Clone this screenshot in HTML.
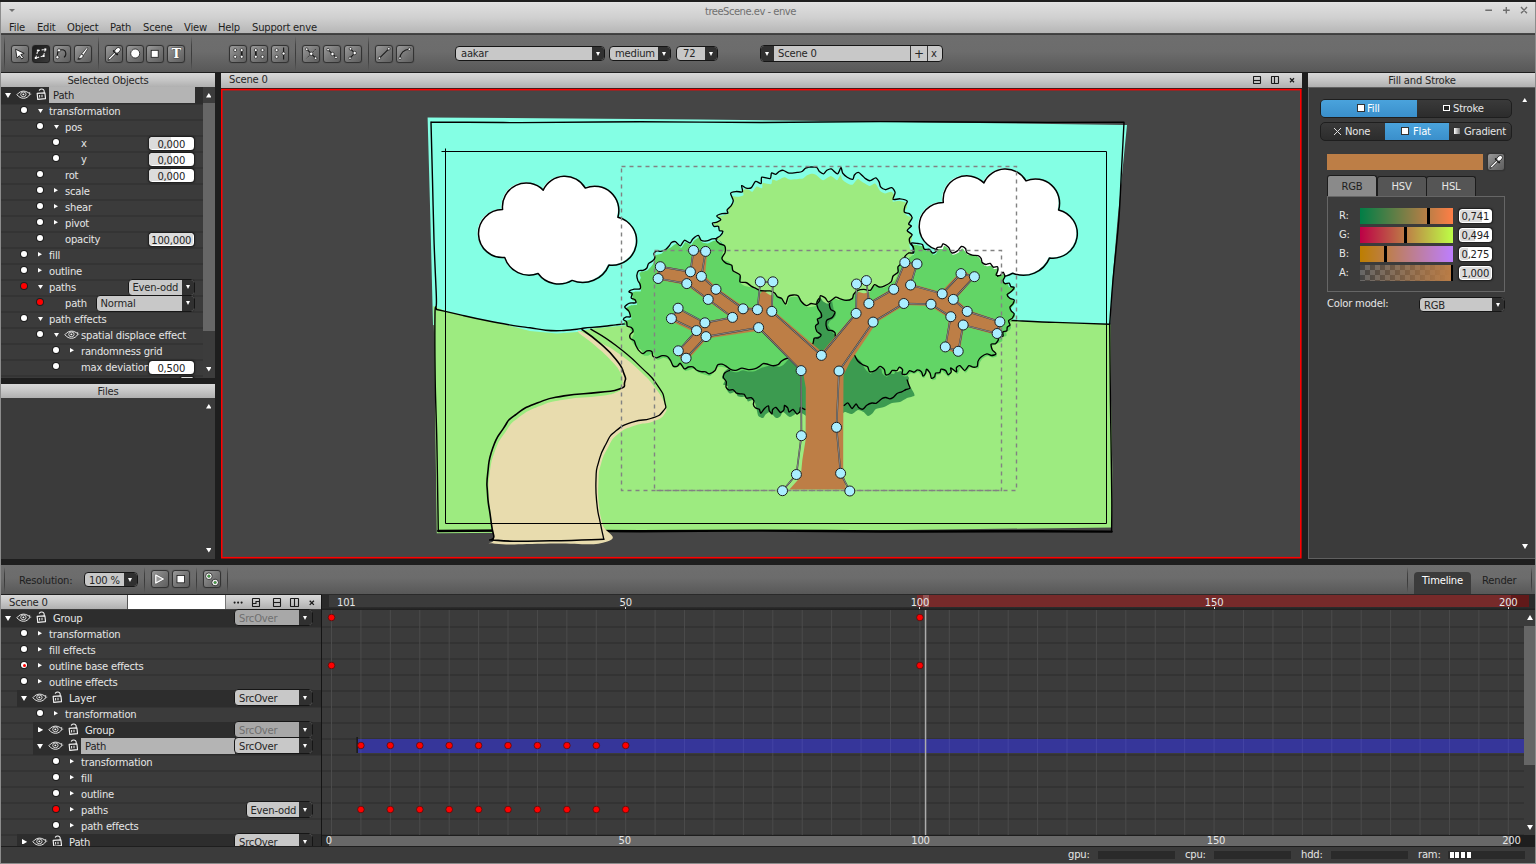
<!DOCTYPE html>
<html lang="en"><head><meta charset="utf-8"><title>treeScene.ev - enve</title>
<style>
*{box-sizing:border-box;margin:0;padding:0}
html,body{width:1536px;height:864px;overflow:hidden}
body{position:relative;background:#1e1e1e;font-family:"DejaVu Sans","Liberation Sans",sans-serif;font-size:10px;line-height:12px;color:#e6e6e6;letter-spacing:-0.2px;-webkit-font-smoothing:antialiased}
.a{position:absolute}
.t{position:absolute;white-space:pre;line-height:12px;height:12px}
.dk{color:#1e1e1e}
.hdr{position:absolute;background:linear-gradient(#d8d8d8,#c8c8c8 45%,#b0b0b0);color:#262626;text-align:center}
.tb{position:absolute;background:linear-gradient(#6e6e6e,#6c6c6c 45%,#585858)}
.btn{position:absolute;width:18px;height:18px;border:1px solid #333;box-shadow:0 0 1px rgba(0,0,0,.5);border-radius:3px;background:linear-gradient(135deg,#9a9a9a,#787878 50%,#5e5e5e);}
.btn.on{background:linear-gradient(135deg,#1a1a1a,#2a2a2a 50%,#3a3a3a);border-color:#222}
.btn svg{position:absolute}
.sep{position:absolute;width:1px;background:linear-gradient(rgba(50,50,50,0),#444 25%,#3a3a3a 50%,#444 75%,rgba(50,50,50,0))}
.cb{position:absolute;border:1px solid #161616;border-radius:4px;background:#c8c8c8;color:#262626;overflow:hidden}
.cb .ar{position:absolute;right:0;top:0;bottom:0;width:12px;background:#303030}
.cb .ar:after{content:"";position:absolute;left:50%;top:50%;margin-left:-2.5px;margin-top:-2px;border:2.5px solid transparent;border-top:4px solid #fff;border-bottom:0}
.cb .t{margin-top:1px}
.cb.dis{background:#a8a8a8;color:#707070}
.row{position:absolute;left:1px;height:16px}
.vb{position:absolute;border-radius:3.5px;background:#fff;color:#222;box-shadow:0 0 1.5px .3px rgba(20,20,20,.8);overflow:hidden}
.vb i{position:absolute;left:.6px;top:.6px;bottom:.6px;background:#dcdcdc;border-radius:2.5px 0 0 2.5px}
.vb .t{left:0;right:0;text-align:center;top:0px}

</style></head>
<body>
<div class="a" style="left:1px;top:2px;width:1534px;height:31px;background:linear-gradient(#e4e4e4,#dedede 6%,#d0d0d0 50%,#b6b6b6)"></div><div class="a" style="left:1px;top:33px;width:1534px;height:2px;background:linear-gradient(#4a4a4a,#3a3a3a)"></div>
<div class="a" style="left:9px;top:9px;border:3px solid transparent;border-top:3px solid #707070;border-bottom:0;width:0;height:0"></div>
<div class="t" style="left:705px;top:5.5px;color:#707070;letter-spacing:-0.5px">treeScene.ev - enve</div>
<svg class="a" style="left:1480px;top:2px" width="50" height="16" viewBox="1480 2 50 16"><g stroke="#6e6e6e" stroke-width="1.4" fill="none"><path d="M1485.3 10.2h6.700M1503 10.2h6.700M1506.3 6.900v6.700M1521 7.100l6 6.2M1527 7.100l-6 6.2"/></g></svg>
<div class="t dk" style="left:9px;top:22px">File</div>
<div class="t dk" style="left:37px;top:22px">Edit</div>
<div class="t dk" style="left:67px;top:22px">Object</div>
<div class="t dk" style="left:110px;top:22px">Path</div>
<div class="t dk" style="left:143px;top:22px">Scene</div>
<div class="t dk" style="left:184px;top:22px">View</div>
<div class="t dk" style="left:218px;top:22px">Help</div>
<div class="t dk" style="left:252px;top:22px">Support enve</div>
<div class="tb" style="left:1px;top:35px;width:1535px;height:37px"></div>
<div class="sep" style="left:4px;top:36px;height:35px"></div>
<div class="sep" style="left:98px;top:36px;height:35px"></div>
<div class="sep" style="left:191px;top:36px;height:35px"></div>
<div class="sep" style="left:295px;top:36px;height:35px"></div>
<div class="sep" style="left:368px;top:36px;height:35px"></div>
<div class="btn" style="left:11px;top:45px"><svg style="left:-1px;top:-1px;width:18px;height:18px" viewBox="0 0 18 18"><path d="M4.6 4.2l8.6 4.2-3.4 1.2 2.6 3.2-1.6 1.2-2.5-3.3-2.3 2.4z" fill="#fff" stroke="#1a1a1a" stroke-width="0.9" stroke-linejoin="round"/></svg></div>
<div class="btn on" style="left:32px;top:45px"><svg style="left:-1px;top:-1px;width:18px;height:18px" viewBox="0 0 18 18"><path d="M5.8 5.5L13.3 4.4 11.6 11 3.8 13z" fill="none" stroke="#e8e8e8" stroke-width="1.1" stroke-dasharray="2.2 1.6"/><rect x="4.9" y="4.6" width="2" height="2" fill="#fff"/><rect x="12.3" y="3.4" width="2" height="2" fill="#fff"/><rect x="2.8" y="12" width="2" height="2" fill="#fff"/><rect x="10.6" y="10" width="2" height="2" fill="#fff"/></svg></div>
<div class="btn" style="left:53px;top:45px"><svg style="left:-1px;top:-1px;width:18px;height:18px" viewBox="0 0 18 18"><path d="M4.4 12.2C4.2 8.5 5.2 5.4 6.2 5.3C9.5 4 12.5 5 12.8 8C13 10 12.5 11.5 11 12.4" fill="none" stroke="#1a1a1a" stroke-width="1.1"/><circle cx="6" cy="5.3" r="1.6" fill="#fff" stroke="#1a1a1a" stroke-width="0.7"/><circle cx="4.4" cy="12.2" r="1.6" fill="#fff" stroke="#1a1a1a" stroke-width="0.7"/></svg></div>
<div class="btn" style="left:74px;top:45px"><svg style="left:-1px;top:-1px;width:18px;height:18px" viewBox="0 0 18 18"><path d="M12.8 2.6L14 3.5 9.6 10.2 7.6 9z" fill="#fff" stroke="#1a1a1a" stroke-width="0.7"/><path d="M7.4 9.2L9.4 10.6C9 12.8 6.8 13.8 4 13.6C5.6 12.8 5.6 10.4 7.4 9.2z" fill="#fff" stroke="#1a1a1a" stroke-width="0.7"/><path d="M3.5 14.2h3" stroke="#1a1a1a" stroke-width="0.8"/></svg></div>
<div class="btn" style="left:105px;top:45px"><svg style="left:-1px;top:-1px;width:18px;height:18px" viewBox="0 0 18 18"><path d="M3 15.3L3.6 13.2 9.6 7.2 11 8.6 5 14.6z" fill="#fff" stroke="#1a1a1a" stroke-width="0.8" stroke-linejoin="round"/><path d="M8.8 6l3.4 3.4" stroke="#1a1a1a" stroke-width="2" stroke-linecap="round"/><ellipse cx="12.6" cy="5.3" rx="3.3" ry="2.3" transform="rotate(-45 12.6 5.3)" fill="#fff" stroke="#1a1a1a" stroke-width="0.8"/></svg></div>
<div class="btn" style="left:126px;top:45px"><svg style="left:-1px;top:-1px;width:18px;height:18px" viewBox="0 0 18 18"><circle cx="9.2" cy="8.5" r="4.5" fill="#fff" stroke="#1a1a1a" stroke-width="0.8"/></svg></div>
<div class="btn" style="left:146px;top:45px"><svg style="left:-1px;top:-1px;width:18px;height:18px" viewBox="0 0 18 18"><rect x="5.2" y="5.3" width="7" height="7" fill="#fff" stroke="#1a1a1a" stroke-width="0.8"/></svg></div>
<div class="btn" style="left:167px;top:45px"><svg style="left:-1px;top:-1px;width:18px;height:18px" viewBox="0 0 18 18"><text x="9.2" y="13.4" font-family="'DejaVu Serif','Liberation Serif',serif" font-weight="bold" font-size="13" text-anchor="middle" fill="#fff" stroke="#1a1a1a" stroke-width="0.6" paint-order="stroke">T</text></svg></div>
<div class="btn" style="left:229px;top:45px"><svg style="left:-1px;top:-1px;width:18px;height:18px" viewBox="0 0 18 18"><path d="M12.7 5.1v6.7" stroke="#1a1a1a" stroke-width="1.8"/><circle cx="6.2" cy="5.1" r="1.5" fill="#fff" stroke="#1a1a1a" stroke-width="0.7"/><circle cx="12.7" cy="5.1" r="1.5" fill="#fff" stroke="#1a1a1a" stroke-width="0.7"/><circle cx="6.2" cy="11.8" r="1.5" fill="#fff" stroke="#1a1a1a" stroke-width="0.7"/><circle cx="12.7" cy="11.8" r="1.5" fill="#fff" stroke="#1a1a1a" stroke-width="0.7"/></svg></div>
<div class="btn" style="left:250px;top:45px"><svg style="left:-1px;top:-1px;width:18px;height:18px" viewBox="0 0 18 18"><path d="M5.8 5.1v6.7" stroke="#1a1a1a" stroke-width="1.8"/><circle cx="5.8" cy="5.1" r="1.5" fill="#fff" stroke="#1a1a1a" stroke-width="0.7"/><circle cx="12.5" cy="5.1" r="1.5" fill="#fff" stroke="#1a1a1a" stroke-width="0.7"/><circle cx="5.8" cy="11.8" r="1.5" fill="#fff" stroke="#1a1a1a" stroke-width="0.7"/><circle cx="12.5" cy="11.8" r="1.5" fill="#fff" stroke="#1a1a1a" stroke-width="0.7"/></svg></div>
<div class="btn" style="left:271px;top:45px"><svg style="left:-1px;top:-1px;width:18px;height:18px" viewBox="0 0 18 18"><path d="M12.6 2.5v12" stroke="#1a1a1a" stroke-width="1.2"/><circle cx="5.6" cy="5.1" r="1.5" fill="#fff" stroke="#1a1a1a" stroke-width="0.7"/><circle cx="5.6" cy="11.8" r="1.5" fill="#fff" stroke="#1a1a1a" stroke-width="0.7"/><circle cx="12.6" cy="8.5" r="1.5" fill="#fff" stroke="#1a1a1a" stroke-width="0.7"/></svg></div>
<div class="btn" style="left:302px;top:45px"><svg style="left:-1px;top:-1px;width:18px;height:18px" viewBox="0 0 18 18"><path d="M4.7 4.2L13.6 13.2" stroke="#1a1a1a" stroke-width="1.1"/><path d="M13.6 4.2L4.7 13.2" stroke="#1a1a1a" stroke-width="0.9" stroke-dasharray="1.5 1.5"/><circle cx="4.7" cy="4.2" r="1.3" fill="#fff" stroke="#1a1a1a" stroke-width="0.7"/><circle cx="13.6" cy="13.2" r="1.3" fill="#fff" stroke="#1a1a1a" stroke-width="0.7"/><circle cx="9.2" cy="8.8" r="1.7" fill="#fff" stroke="#1a1a1a" stroke-width="0.7"/></svg></div>
<div class="btn" style="left:323px;top:45px"><svg style="left:-1px;top:-1px;width:18px;height:18px" viewBox="0 0 18 18"><path d="M5.1 4.6L13 12.4" stroke="#1a1a1a" stroke-width="1.1"/><circle cx="5.1" cy="4.6" r="1.3" fill="#fff" stroke="#1a1a1a" stroke-width="0.7"/><circle cx="9.5" cy="9" r="1.7" fill="#fff" stroke="#1a1a1a" stroke-width="0.7"/><circle cx="13" cy="12.4" r="1.3" fill="#fff" stroke="#1a1a1a" stroke-width="0.7"/></svg></div>
<div class="btn" style="left:344px;top:45px"><svg style="left:-1px;top:-1px;width:18px;height:18px" viewBox="0 0 18 18"><path d="M6.5 3.8L10.7 8 6 13.2" fill="none" stroke="#1a1a1a" stroke-width="1.1"/><circle cx="6.5" cy="3.8" r="1.3" fill="#fff" stroke="#1a1a1a" stroke-width="0.7"/><circle cx="10.7" cy="8" r="1.7" fill="#fff" stroke="#1a1a1a" stroke-width="0.7"/><circle cx="6" cy="13.2" r="1.3" fill="#fff" stroke="#1a1a1a" stroke-width="0.7"/></svg></div>
<div class="btn" style="left:375px;top:45px"><svg style="left:-1px;top:-1px;width:18px;height:18px" viewBox="0 0 18 18"><path d="M4.4 13.2L13.8 3.8" stroke="#1a1a1a" stroke-width="1.1"/><circle cx="4.4" cy="13.2" r="1.3" fill="#fff" stroke="#1a1a1a" stroke-width="0.7"/><circle cx="13.8" cy="3.8" r="1.3" fill="#fff" stroke="#1a1a1a" stroke-width="0.7"/></svg></div>
<div class="btn" style="left:396px;top:45px"><svg style="left:-1px;top:-1px;width:18px;height:18px" viewBox="0 0 18 18"><path d="M4 13.2C4.2 8 8 4.4 13.4 4.2" fill="none" stroke="#1a1a1a" stroke-width="1.1"/><circle cx="4" cy="13.2" r="1.3" fill="#fff" stroke="#1a1a1a" stroke-width="0.7"/><circle cx="13.4" cy="4.2" r="1.3" fill="#fff" stroke="#1a1a1a" stroke-width="0.7"/></svg></div>
<div class="cb" style="left:455px;top:46px;width:150px;height:15px"><div class="t" style="left:5px;top:0px">aakar</div><div class="ar"></div></div>
<div class="cb" style="left:609px;top:46px;width:62px;height:15px"><div class="t" style="left:5px;top:0px">medium</div><div class="ar"></div></div>
<div class="cb" style="left:676px;top:46px;width:42px;height:15px"><div class="t" style="left:6px;top:0px">72</div><div class="ar"></div></div>
<div class="cb" style="left:760px;top:45px;width:183px;height:17px"><div class="ar" style="left:0;right:auto;width:13px"></div><div class="t" style="left:17px;top:1px">Scene 0</div><div class="a" style="left:149px;top:0;width:1px;height:17px;background:#3a3a3a"></div><div class="a" style="left:166px;top:0;width:1px;height:17px;background:#3a3a3a"></div><div class="t" style="left:153px;top:1px;font-size:12px">+</div><div class="t" style="left:170px;top:1px">x</div></div>
<div class="hdr" style="left:1px;top:73px;width:214px;height:14px"><div class="t" style="left:0;right:0;top:1.5px">Selected Objects</div></div>
<div class="a" style="left:1px;top:87px;width:214px;height:291px;background:#3b3b3b;overflow:hidden">
<div class="a" style="left:0;top:16px;width:202px;height:2px;background:#343434"></div>
<div class="a" style="left:0;top:32px;width:202px;height:2px;background:#343434"></div>
<div class="a" style="left:0;top:48px;width:202px;height:2px;background:#343434"></div>
<div class="a" style="left:0;top:64px;width:202px;height:2px;background:#343434"></div>
<div class="a" style="left:0;top:80px;width:202px;height:2px;background:#343434"></div>
<div class="a" style="left:0;top:96px;width:202px;height:2px;background:#343434"></div>
<div class="a" style="left:0;top:112px;width:202px;height:2px;background:#343434"></div>
<div class="a" style="left:0;top:128px;width:202px;height:2px;background:#343434"></div>
<div class="a" style="left:0;top:144px;width:202px;height:2px;background:#343434"></div>
<div class="a" style="left:0;top:160px;width:202px;height:2px;background:#343434"></div>
<div class="a" style="left:0;top:176px;width:202px;height:2px;background:#343434"></div>
<div class="a" style="left:0;top:192px;width:202px;height:2px;background:#343434"></div>
<div class="a" style="left:0;top:208px;width:202px;height:2px;background:#343434"></div>
<div class="a" style="left:0;top:224px;width:202px;height:2px;background:#343434"></div>
<div class="a" style="left:0;top:240px;width:202px;height:2px;background:#343434"></div>
<div class="a" style="left:0;top:256px;width:202px;height:2px;background:#343434"></div>
<div class="a" style="left:0;top:272px;width:202px;height:2px;background:#343434"></div>
<div class="a" style="left:0;top:288px;width:202px;height:2px;background:#343434"></div>
</div>
<div class="a" style="left:0;top:0;width:215px;height:378px;overflow:hidden">
<div class="a" style="left:1px;top:87px;width:202px;height:17px;background:#2d2d2d"></div>
<div class="a" style="left:49px;top:87px;width:146px;height:16px;background:#b4b4b4"></div>
<svg class="a" style="left:5px;top:92.5px" width="6" height="5" viewBox="0 0 6 5"><path d="M0 0h6L3.0 5z" fill="#fff"/></svg>
<svg class="a" style="left:16px;top:89.6px" width="16" height="9.6" viewBox="0 0 16 11" preserveAspectRatio="none"><path d="M0.9 5.4C3 2.4 5.4 1.3 7.6 1.3S12.2 2.5 14 4.8C12.4 8 10 9.5 7.6 9.5S2.8 8.2 0.9 5.4z" fill="none" stroke="#f2f2f2" stroke-width="1"/><path d="M12.6 3.2l1.6-.5M13.4 4.6l1.9.1" stroke="#f2f2f2" stroke-width="0.7" fill="none"/><circle cx="7.4" cy="5" r="2.7" fill="none" stroke="#f2f2f2" stroke-width="0.9"/><circle cx="7.4" cy="5" r="1" fill="#f2f2f2"/></svg>
<svg class="a" style="left:35.5px;top:88.2px" width="10.6" height="12.4" viewBox="0 0 12 13" preserveAspectRatio="none"><path d="M9.3 5V3.6C9.3 1.9 8 1 6.6 1 5.4 1 4.4 1.5 3.8 2.3" fill="none" stroke="#f2f2f2" stroke-width="1.2" stroke-linecap="round"/><path d="M1.3 5.7l8.8-.5.7 5.9-8.8.8z" fill="none" stroke="#f2f2f2" stroke-width="1.3" stroke-linejoin="round"/><path d="M4.1 7.3v2.6M6.8 7.1v2.6" stroke="#f2f2f2" stroke-width="1.1"/></svg>
<div class="t dk" style="left:53px;top:90px">Path</div>
<div class="a" style="left:20px;top:106.2px;width:8px;height:8px;border-radius:4px;background:#1e1e1e"></div><div class="a" style="left:21px;top:107.2px;width:6px;height:6px;border-radius:3px;background:#fff"></div><svg class="a" style="left:37.5px;top:109px" width="5" height="4" viewBox="0 0 5 4"><path d="M0 0h5L2.5 4z" fill="#fff"/></svg><div class="t" style="left:49px;top:106px;color:#e6e6e6">transformation</div>
<div class="a" style="left:36px;top:122.2px;width:8px;height:8px;border-radius:4px;background:#1e1e1e"></div><div class="a" style="left:37px;top:123.2px;width:6px;height:6px;border-radius:3px;background:#fff"></div><svg class="a" style="left:53.5px;top:125px" width="5" height="4" viewBox="0 0 5 4"><path d="M0 0h5L2.5 4z" fill="#fff"/></svg><div class="t" style="left:65px;top:122px;color:#e6e6e6">pos</div>
<div class="a" style="left:52px;top:138.2px;width:8px;height:8px;border-radius:4px;background:#1e1e1e"></div><div class="a" style="left:53px;top:139.2px;width:6px;height:6px;border-radius:3px;background:#fff"></div><div class="t" style="left:81px;top:138px;color:#e6e6e6">x</div>
<div class="vb" style="left:148.5px;top:136.5px;width:45.5px;height:13.5px"><i style="width:21.8px"></i><div class="t" style="top:2.2px">0,000</div></div>
<div class="a" style="left:52px;top:154.2px;width:8px;height:8px;border-radius:4px;background:#1e1e1e"></div><div class="a" style="left:53px;top:155.2px;width:6px;height:6px;border-radius:3px;background:#fff"></div><div class="t" style="left:81px;top:154px;color:#e6e6e6">y</div>
<div class="vb" style="left:148.5px;top:152.5px;width:45.5px;height:13.5px"><i style="width:21.8px"></i><div class="t" style="top:2.2px">0,000</div></div>
<div class="a" style="left:36px;top:170.2px;width:8px;height:8px;border-radius:4px;background:#1e1e1e"></div><div class="a" style="left:37px;top:171.2px;width:6px;height:6px;border-radius:3px;background:#fff"></div><div class="t" style="left:65px;top:170px;color:#e6e6e6">rot</div>
<div class="vb" style="left:148.5px;top:168.5px;width:45.5px;height:13.5px"><i style="width:21.8px"></i><div class="t" style="top:2.2px">0,000</div></div>
<div class="a" style="left:36px;top:186.2px;width:8px;height:8px;border-radius:4px;background:#1e1e1e"></div><div class="a" style="left:37px;top:187.2px;width:6px;height:6px;border-radius:3px;background:#fff"></div><svg class="a" style="left:53.7px;top:188.2px" width="4" height="4.6" viewBox="0 0 4 4.6"><path d="M0 0v4.6L4 2.3z" fill="#fff"/></svg><div class="t" style="left:65px;top:186px;color:#e6e6e6">scale</div>
<div class="a" style="left:36px;top:202.2px;width:8px;height:8px;border-radius:4px;background:#1e1e1e"></div><div class="a" style="left:37px;top:203.2px;width:6px;height:6px;border-radius:3px;background:#fff"></div><svg class="a" style="left:53.7px;top:204.2px" width="4" height="4.6" viewBox="0 0 4 4.6"><path d="M0 0v4.6L4 2.3z" fill="#fff"/></svg><div class="t" style="left:65px;top:202px;color:#e6e6e6">shear</div>
<div class="a" style="left:36px;top:218.2px;width:8px;height:8px;border-radius:4px;background:#1e1e1e"></div><div class="a" style="left:37px;top:219.2px;width:6px;height:6px;border-radius:3px;background:#fff"></div><svg class="a" style="left:53.7px;top:220.2px" width="4" height="4.6" viewBox="0 0 4 4.6"><path d="M0 0v4.6L4 2.3z" fill="#fff"/></svg><div class="t" style="left:65px;top:218px;color:#e6e6e6">pivot</div>
<div class="a" style="left:36px;top:234.2px;width:8px;height:8px;border-radius:4px;background:#1e1e1e"></div><div class="a" style="left:37px;top:235.2px;width:6px;height:6px;border-radius:3px;background:#fff"></div><div class="t" style="left:65px;top:234px;color:#e6e6e6">opacity</div>
<div class="vb" style="left:148.5px;top:232.5px;width:45.5px;height:13.5px"><i style="right:1px;border-radius:2.5px"></i><div class="t" style="top:2.2px">100,000</div></div>
<div class="a" style="left:20px;top:250.2px;width:8px;height:8px;border-radius:4px;background:#1e1e1e"></div><div class="a" style="left:21px;top:251.2px;width:6px;height:6px;border-radius:3px;background:#fff"></div><svg class="a" style="left:37.7px;top:252.2px" width="4" height="4.6" viewBox="0 0 4 4.6"><path d="M0 0v4.6L4 2.3z" fill="#fff"/></svg><div class="t" style="left:49px;top:250px;color:#e6e6e6">fill</div>
<div class="a" style="left:20px;top:266.2px;width:8px;height:8px;border-radius:4px;background:#1e1e1e"></div><div class="a" style="left:21px;top:267.2px;width:6px;height:6px;border-radius:3px;background:#fff"></div><svg class="a" style="left:37.7px;top:268.2px" width="4" height="4.6" viewBox="0 0 4 4.6"><path d="M0 0v4.6L4 2.3z" fill="#fff"/></svg><div class="t" style="left:49px;top:266px;color:#e6e6e6">outline</div>
<div class="a" style="left:20px;top:282.2px;width:8px;height:8px;border-radius:4px;background:#1e1e1e"></div><div class="a" style="left:21px;top:283.2px;width:6px;height:6px;border-radius:3px;background:#f00"></div><svg class="a" style="left:37.5px;top:285px" width="5" height="4" viewBox="0 0 5 4"><path d="M0 0h5L2.5 4z" fill="#fff"/></svg><div class="t" style="left:49px;top:282px;color:#e6e6e6">paths</div>
<div class="cb" style="left:128px;top:279px;width:67px;height:16.5px"><div class="t" style="left:3.5px;top:1.2px">Even-odd</div><div class="ar" style="width:12px"></div></div>
<div class="a" style="left:36px;top:298.2px;width:8px;height:8px;border-radius:4px;background:#1e1e1e"></div><div class="a" style="left:37px;top:299.2px;width:6px;height:6px;border-radius:3px;background:#f00"></div><div class="t" style="left:65px;top:298px;color:#e6e6e6">path</div>
<div class="cb" style="left:96px;top:295px;width:99px;height:16.5px"><div class="t" style="left:3.5px;top:1.2px">Normal</div><div class="ar" style="width:12px"></div></div>
<div class="a" style="left:20px;top:314.2px;width:8px;height:8px;border-radius:4px;background:#1e1e1e"></div><div class="a" style="left:21px;top:315.2px;width:6px;height:6px;border-radius:3px;background:#fff"></div><svg class="a" style="left:37.5px;top:317px" width="5" height="4" viewBox="0 0 5 4"><path d="M0 0h5L2.5 4z" fill="#fff"/></svg><div class="t" style="left:49px;top:314px;color:#e6e6e6">path effects</div>
<div class="a" style="left:36px;top:330.2px;width:8px;height:8px;border-radius:4px;background:#1e1e1e"></div><div class="a" style="left:37px;top:331.2px;width:6px;height:6px;border-radius:3px;background:#fff"></div>
<svg class="a" style="left:53.5px;top:333px" width="5" height="4" viewBox="0 0 5 4"><path d="M0 0h5L2.5 4z" fill="#fff"/></svg>
<svg class="a" style="left:64px;top:329.6px" width="16" height="9.6" viewBox="0 0 16 11" preserveAspectRatio="none"><path d="M0.9 5.4C3 2.4 5.4 1.3 7.6 1.3S12.2 2.5 14 4.8C12.4 8 10 9.5 7.6 9.5S2.8 8.2 0.9 5.4z" fill="none" stroke="#f2f2f2" stroke-width="1"/><path d="M12.6 3.2l1.6-.5M13.4 4.6l1.9.1" stroke="#f2f2f2" stroke-width="0.7" fill="none"/><circle cx="7.4" cy="5" r="2.7" fill="none" stroke="#f2f2f2" stroke-width="0.9"/><circle cx="7.4" cy="5" r="1" fill="#f2f2f2"/></svg>
<div class="t" style="left:81px;top:330px">spatial displace effect</div>
<div class="a" style="left:52px;top:346.2px;width:8px;height:8px;border-radius:4px;background:#1e1e1e"></div><div class="a" style="left:53px;top:347.2px;width:6px;height:6px;border-radius:3px;background:#fff"></div><svg class="a" style="left:69.7px;top:348.2px" width="4" height="4.6" viewBox="0 0 4 4.6"><path d="M0 0v4.6L4 2.3z" fill="#fff"/></svg><div class="t" style="left:81px;top:346px;color:#e6e6e6">randomness grid</div>
<div class="a" style="left:52px;top:362.2px;width:8px;height:8px;border-radius:4px;background:#1e1e1e"></div><div class="a" style="left:53px;top:363.2px;width:6px;height:6px;border-radius:3px;background:#fff"></div><div class="t" style="left:81px;top:362px;color:#e6e6e6">max deviation</div>
<div class="vb" style="left:148.5px;top:360.5px;width:45.5px;height:13.5px"><div class="t" style="top:2.2px">0,500</div></div>
<div class="vb" style="left:180px;top:376.5px;width:14px;height:13.5px"><i style="right:1px;border-radius:2.5px"></i><div class="t" style="top:2.2px"></div></div>
</div>
<div class="a" style="left:203px;top:87px;width:12px;height:291px;background:#3c3c3c"></div>
<div class="a" style="left:203px;top:103px;width:12px;height:228px;background:#666"></div>
<svg class="a" style="left:205.7px;top:93px" width="5.6" height="4.6" viewBox="0 0 5.6 4.6"><path d="M0 4.6h5.6L2.8 0z" fill="#fff"/></svg>
<svg class="a" style="left:205.7px;top:367px" width="5.6" height="4.6" viewBox="0 0 5.6 4.6"><path d="M0 0h5.6L2.8 4.6z" fill="#fff"/></svg>
<div class="hdr" style="left:1px;top:384px;width:214px;height:14px"><div class="t" style="left:0;right:0;top:1.5px">Files</div></div>
<div class="a" style="left:1px;top:398px;width:214px;height:161px;background:#3b3b3b"></div>
<svg class="a" style="left:205.7px;top:404px" width="5.6" height="4.6" viewBox="0 0 5.6 4.6"><path d="M0 4.6h5.6L2.8 0z" fill="#fff"/></svg>
<svg class="a" style="left:205.7px;top:548px" width="5.6" height="4.6" viewBox="0 0 5.6 4.6"><path d="M0 0h5.6L2.8 4.6z" fill="#fff"/></svg>
<div class="hdr" style="left:221px;top:73px;width:1081px;height:15px;text-align:left"><div class="t" style="left:8px;top:1px">Scene 0</div><svg class="a" style="left:1032px;top:3px" width="46" height="9" viewBox="0 0 46 9"><g fill="none" stroke="#1a1a1a" stroke-width="1.1"><rect x="0.5" y="0.5" width="7" height="7" rx="0.5"/><path d="M0.5 4.5h7"/><rect x="18.5" y="0.5" width="7" height="7" rx="0.5"/><path d="M21.5 0.5v7"/><path d="M37 2.3l4 4M41 2.3l-4 4" stroke-width="1.3"/></g></svg></div>
<div class="a" style="left:221px;top:88px;width:1081px;height:471px;background:#1e1e1e;overflow:hidden">
<svg class="a" style="left:0;top:0" width="1081" height="471" viewBox="221 88 1081 471"><rect x="221.75" y="89.6" width="1079.05" height="468.1" fill="#454545" stroke="#f00" stroke-width="1.6"/></svg>
<div class="a" style="left:2px;top:2px;width:1077px;height:467px;overflow:hidden">
<svg class="a" style="left:0;top:0" width="1077" height="467" viewBox="223 90 1077 467">
<path d="M427.6 117.4L700 119.5L1127 125L1117.5 220L1112.5 280L1110 326L1100 332L700 340L560 345L433 325L430.4 220z" fill="#84ffe4"/>
<path d="M433.2 306L445.3 311L464.1 315.5L487.5 320.8L510.9 326L530 331L557 333.5L577 332L592.5 328.4L623.8 325.5L700 322L1008.3 320.3L1055.6 322.4L1110.5 324.2L1111 400L1112.3 470L1112 527.5L900 530L700 531.5L436.8 533.3L435.5 440L434.4 345z" fill="#9deb80"/>
<path d="M431 122C445.8 122.1 485.2 122.6 520 122.6C554.8 122.6 600 121.8 640 121.8C680 121.8 720 122.5 760 122.5C800 122.5 840 121.6 880 121.6C920 121.6 959.3 122.2 1000 122.3C1040.7 122.4 1103.3 122.3 1124 122.3M431 122C431.2 131.7 432 160.3 432.5 180C433 199.7 433.4 220.8 434 240C434.6 259.2 435.9 283.9 436.3 295C436.7 306.1 436.2 304.6 436.2 306.5M1124 122.5C1123.6 130.4 1122.4 153.8 1121.5 170C1120.6 186.2 1120.2 201.7 1118.8 220C1117.4 238.3 1114.5 262.7 1113 280C1111.5 297.3 1110.2 316.7 1109.7 324" fill="none" stroke="#000" stroke-linecap="round" stroke-linejoin="round" stroke-width="1.4"/>
<path d="M436.7 309.5C436.4 310.1 435.2 301.2 435 313C434.8 324.8 434.9 358.8 435.2 380C435.5 401.2 436.4 420 436.8 440C437.2 460 437.6 484.8 437.8 500C438.1 515.2 438.2 525.8 438.3 531M1109.7 324.2C1109.8 336.8 1110.2 380.7 1110.4 400C1110.6 419.3 1110.8 423.3 1111 440C1111.2 456.7 1111.7 484.7 1111.8 500C1111.9 515.3 1111.6 526.3 1111.6 531.6M436.7 309.5C438.1 309.8 440.7 310.4 445.3 311.4C449.9 312.4 457.1 314.1 464.1 315.7C471.1 317.3 479.7 319.2 487.5 320.8C495.3 322.4 503.8 323.9 510.9 325.1C518 326.3 524.2 327 530 327.8C535.8 328.6 540.4 329.7 545.6 330.2C550.8 330.7 556.1 330.8 561.3 330.6C566.5 330.4 573 329.6 576.9 329.2C580.8 328.8 580.8 328.4 584.7 328C588.6 327.6 595.1 327.2 600.3 326.7C605.5 326.2 611.4 325.4 615.9 324.9C620.4 324.4 625.1 323.8 627 323.6M1008.3 320.3C1016.2 320.6 1038.7 321.8 1055.6 322.4C1072.5 323 1100.7 323.9 1109.7 324.2" fill="none" stroke="#000" stroke-linecap="round" stroke-linejoin="round" stroke-width="1.4"/>
<path d="M438.3 531C451.9 530.9 486.4 530.4 520 530.4C553.6 530.4 600 531.2 640 531.2C680 531.2 720 530.6 760 530.6C800 530.6 840 531.4 880 531.5C920 531.6 961.4 531.2 1000 531.2C1038.6 531.2 1093 531.5 1111.6 531.6" fill="none" stroke="#000" stroke-linecap="round" stroke-linejoin="round" stroke-width="2.4"/>
<path d="M578.4 332.3C580.8 335.4 586 337.7 595 345.5C604 353.3 605.3 354.4 612 361.5C618.7 368.6 617.2 367.1 620 372C622.8 376.9 622.2 375.7 622.5 380C622.8 384.3 622.7 384.7 621 388C619.3 391.3 621.6 390.4 616 392.5C610.4 394.6 613.6 394.1 600 396C586.4 397.9 581 396.8 565 399.5C549 402.2 552.5 401.1 540 406C527.5 410.9 527.2 411.1 518 418C508.8 424.9 511.6 423.2 505.5 432C499.4 440.8 499.3 439.5 495 451C490.7 462.5 491.1 463.3 489.5 475C487.9 486.7 488.6 484.1 489 495C489.4 505.9 489.7 504.5 491 516C492.3 527.5 492.9 530.6 494 538C495.1 545.4 480.1 542.2 495 543.7C509.9 545.2 520.1 544.1 550 543.5C579.9 542.9 593.3 546.7 607.3 541.5C621.3 536.3 604.7 533.7 602.5 524C600.3 514.3 600.1 516.5 599 505C597.9 493.5 598 491.9 598.5 481C599 470.1 598.5 472.9 601 464C603.5 455.1 603.5 455.5 608 447.5C612.5 439.5 610.8 439.9 618 434C625.2 428.1 625.7 428.8 635 425.5C644.3 422.2 645.1 424.6 653 421.5C660.9 418.4 661.4 418.7 664.5 414C667.6 409.3 666.8 410.7 664.5 404C662.2 397.3 662.3 397.5 656 389C649.7 380.5 651.1 381.6 641 372C630.9 362.4 628.9 360.9 618 353C607.1 345.1 608.5 347.6 600 342.5C591.5 337.4 591.8 336.7 586 334C580.2 331.3 576 329.2 578.4 332.3z" fill="#e8dcae"/>
<path d="M582.1 329.6C587.1 333.4 588.4 333.2 598.6 342.1C608.8 351 608.4 350 616 359.4C623.6 368.8 621.2 366.5 623.8 373.3C626.4 380.1 626 377.3 624.7 382C623.4 386.7 627.2 385.9 619.4 389C611.6 392.1 615.2 390.3 598.6 392.4C582 394.5 582.1 392.8 563.9 395.9C545.7 399 552.4 397.1 537.8 402.8C523.2 408.5 525.7 407.2 515.3 415C504.9 422.8 509.9 418.9 503.1 428.9C496.3 438.9 497.3 435.1 492.7 448.2C488.1 461.3 489.4 459 487.8 472.5C486.2 486 486.8 480.8 487.5 493.3C488.2 505.8 488.3 501.7 490.1 514.2C491.9 526.7 491.3 527.1 493.6 535C495.9 542.9 481 538.7 497.9 540.4C514.8 542.1 518.2 541.1 550 540.8C581.8 540.5 587.7 539.8 603.8 539.3" fill="none" stroke="#000" stroke-linecap="round" stroke-linejoin="round" stroke-width="1.6"/>
<path d="M590.8 329.1C598.4 334.1 600.6 333.9 616 345.6C631.4 357.3 629.5 356.1 642 368.1C654.5 380.1 650.8 375.6 657.6 385.5C664.4 395.4 663 393.3 664.6 401.1C666.2 408.9 667 406.3 662.8 411.5C658.6 416.7 659.6 415.4 650.7 418.5C641.9 421.6 643.7 418.2 633.3 421.9C622.9 425.6 624.3 424 616 430.8C607.7 437.6 610.8 435.3 605.6 444.7C600.4 454.1 601.5 451.7 598.6 462.1C595.7 472.5 596.5 466.9 596 479.4C595.5 491.9 595.6 490.8 596.9 503.8C598.2 516.8 598.2 512.1 600.3 522.8C602.4 533.4 602.8 534.3 603.8 539.3" fill="none" stroke="#000" stroke-linecap="round" stroke-linejoin="round" stroke-width="1.3"/>
<g transform="translate(0 0)"><path d="M502.6 209.6A23.8 23.8 0 0 1 543.2 190.1A23.7 23.7 0 0 1 585.3 188.1A24.2 24.2 0 0 1 617.9 217.2A24.4 24.4 0 0 1 608.9 265.1A28.4 28.4 0 0 1 572.1 280.4A25.7 25.7 0 0 1 538.1 273.5A25.7 25.7 0 0 1 504.7 257.5A24 24 0 1 1 502.6 209.6z" fill="#fff" transform="translate(-1 -0.6)"/><path d="M502.6 209.6A23.8 23.8 0 0 1 543.2 190.1A23.7 23.7 0 0 1 585.3 188.1A24.2 24.2 0 0 1 617.9 217.2A24.4 24.4 0 0 1 608.9 265.1A28.4 28.4 0 0 1 572.1 280.4A25.7 25.7 0 0 1 538.1 273.5A25.7 25.7 0 0 1 504.7 257.5A24 24 0 1 1 502.6 209.6z" fill="none" stroke="#000" stroke-linecap="round" stroke-linejoin="round" stroke-width="1.5"/></g>
<g transform="translate(440.7 -7.2)"><path d="M502.6 209.6A23.8 23.8 0 0 1 543.2 190.1A23.7 23.7 0 0 1 585.3 188.1A24.2 24.2 0 0 1 617.9 217.2A24.4 24.4 0 0 1 608.9 265.1A28.4 28.4 0 0 1 572.1 280.4A25.7 25.7 0 0 1 538.1 273.5A25.7 25.7 0 0 1 504.7 257.5A24 24 0 1 1 502.6 209.6z" fill="#fff" transform="translate(-1 -0.6)"/><path d="M502.6 209.6A23.8 23.8 0 0 1 543.2 190.1A23.7 23.7 0 0 1 585.3 188.1A24.2 24.2 0 0 1 617.9 217.2A24.4 24.4 0 0 1 608.9 265.1A28.4 28.4 0 0 1 572.1 280.4A25.7 25.7 0 0 1 538.1 273.5A25.7 25.7 0 0 1 504.7 257.5A24 24 0 1 1 502.6 209.6z" fill="none" stroke="#000" stroke-linecap="round" stroke-linejoin="round" stroke-width="1.5"/></g>
<path d="M729 368C728 368.5 724.9 370.8 724.1 372C723.2 373.2 721.9 377 722 378C722.1 379 724.9 379.5 725 380.3C725.2 381 722.9 383.9 723.2 384.5C723.5 385.2 727.3 385.5 727.7 386.2C728.2 386.8 726.7 389.1 727 390C727.3 390.9 729 393.2 729.9 393.5C730.9 393.7 734.2 391.8 735.1 392.1C736.1 392.4 737 395.6 737.8 396.2C738.6 396.7 741.1 396.9 742 397C742.9 397.1 745.2 396.6 745.9 397.1C746.6 397.6 747.1 401.1 747.9 401.4C748.6 401.7 751.7 399.7 752.5 399.9C753.3 400.1 754.5 401.7 755 403C755.5 404.3 756.6 409.5 757 411C757.4 412.5 757.7 415.1 758.4 415.9C759.1 416.7 762.1 418.2 763 418C763.9 417.8 765 414.9 765.8 414.2C766.6 413.5 768.8 411.6 770 412C771.2 412.4 774.8 417.5 776 418C777.2 418.5 779.7 416.9 780.5 416.2C781.3 415.5 781.9 411.9 783 412C784.1 412.1 788.4 416.9 790 417C791.6 417.1 795.6 413.4 797 413C798.4 412.6 800.9 412.9 801.9 413.3C803 413.6 805.1 415.5 806 416C806.9 416.5 808.7 417.5 809.4 417.3C810.2 417.1 811.6 414.3 812.4 414.1C813.1 414 815.1 416 815.8 416C816.6 415.9 818.2 413.9 818.9 413.8C819.7 413.8 821.6 415.8 822.4 415.6C823.1 415.5 824.6 412.5 825.3 412.5C826.1 412.5 828.2 415.6 828.9 415.6C829.7 415.6 831.2 412.6 831.9 412.5C832.7 412.5 834.7 415 835.5 415C836.2 414.9 837.7 412 838.4 411.9C839.2 411.8 841.2 414.1 841.9 414.1C842.7 414.1 843.8 412 845 412C846.2 412 850.5 414.2 852 414C853.5 413.8 856.6 410.2 858 410C859.4 409.8 862.4 411.3 863.6 412C864.7 412.7 866.9 415.9 868 416C869.1 416.1 871.7 414 872.6 413.2C873.6 412.4 874.7 409.7 876 409C877.3 408.3 882.1 407.7 884 407C885.9 406.3 890.1 403.6 892 403C893.9 402.4 898.2 402.6 900 402C901.8 401.4 905.3 398.8 907 398C908.7 397.2 914 396.7 914.5 395.5C915 394.3 911.8 389.4 911 388C910.2 386.6 908.2 384.6 908 383.4C907.7 382.2 909.1 379 909 378C908.9 377 907.5 375.5 906.7 375.2C906 374.8 903.4 375.6 902.8 375.1C902.1 374.6 902.2 371.1 901.5 370.7C900.8 370.4 897.4 372.4 896.6 372.1C895.9 371.7 895.9 368.3 895.2 367.9C894.5 367.5 891.4 369 890.8 368.5C890.1 368.1 890.2 364.4 889.6 364C888.9 363.6 885.8 365.1 885.1 364.7C884.4 364.3 884.1 361.3 883.5 360.8C882.9 360.2 880.8 360.3 880 360C879.2 359.7 876.7 359.2 876.4 358.5C876.1 357.8 877.9 354.5 877.4 353.8C877 353.2 873.1 353.7 872.7 353C872.3 352.4 874.3 349 874 348.3C873.6 347.6 870.3 347.7 869.8 347.1C869.3 346.5 870.3 343.7 869.9 343.1C869.5 342.4 866.7 342.2 866.3 341.6C865.9 340.9 866.5 338.4 866.1 337.7C865.7 337.1 863.2 336.7 862.8 336C862.4 335.4 863.1 332.8 862.6 332.2C862.1 331.6 859 331.6 858.6 331C858.1 330.3 859.2 327.5 858.7 326.9C858.3 326.3 855.2 326.2 854.8 325.6C854.4 324.9 855.7 322 855.3 321.3C855 320.6 852 320.5 851.6 319.8C851.2 319.2 852.5 316.2 852.1 315.6C851.6 315 848.3 315.1 847.8 314.5C847.3 313.9 848.5 311 848.1 310.4C847.6 309.7 844.5 309.7 844.1 309.1C843.8 308.4 845.1 305.4 844.7 304.7C844.4 304.1 841.5 303.9 841 303.3C840.4 302.7 840.4 300.8 840 300C839.6 299.2 838.1 296.6 837.2 296.3C836.4 296 833.3 297.6 832.4 297.3C831.5 296.9 830.7 293.6 829.8 293.3C828.9 292.9 825.6 294.9 824.7 294.7C823.8 294.4 822.9 291.3 822.1 290.8C821.3 290.2 818.7 289.7 818 290C817.3 290.3 816.7 293.1 816 293.4C815.2 293.7 812.2 292.1 811.5 292.5C810.8 292.8 810.5 296.1 809.8 296.5C809.1 296.9 806.4 295.8 805.7 296.1C804.9 296.4 804.2 298.8 803.5 299.2C802.8 299.7 800.7 299.6 800 300C799.3 300.4 797.4 301.7 797.1 302.5C796.8 303.3 798 306.3 797.6 307.1C797.1 307.8 793.8 308 793.3 308.8C792.9 309.5 794.2 312.5 793.7 313.2C793.1 313.9 789.2 313.8 788.8 314.5C788.4 315.3 790.4 318.8 790.1 319.5C789.7 320.3 786.2 320.5 785.7 321.2C785.2 321.8 786.3 324.8 785.8 325.5C785.4 326.2 782.1 326.5 781.7 327.3C781.3 328 782.8 331.2 782.4 332C782.1 332.7 778.9 333.1 778.4 333.8C778 334.5 779.2 337.5 778.7 338.2C778.1 338.9 774.4 338.9 773.9 339.6C773.5 340.3 775.3 343.7 775 344.5C774.7 345.3 771.6 345.7 771 346.4C770.4 347 770.4 349.2 770 350C769.6 350.8 768.3 353.2 767.5 353.5C766.6 353.8 763.7 352.1 762.9 352.3C762 352.6 761.1 355.5 760.3 355.8C759.5 356.1 756.6 354.4 755.8 354.9C755.1 355.3 754.6 359.1 753.8 359.5C753 359.8 749.9 357.8 749.1 358.1C748.3 358.5 747.8 362.1 746.9 362.5C746.1 362.8 743 360.7 742.2 360.9C741.4 361.2 740.6 364.4 739.8 364.7C739 365.1 736.3 363.8 735.5 364.1C734.6 364.5 733.6 367.1 732.9 367.6C732.1 368 730 367.5 729 368z" fill="#3c9b50"/>
<path d="M729.6 370.3C729.1 370.6 725.9 371.8 725.2 372.6C724.4 373.4 723.2 376.1 723.3 377.2C723.4 378.3 726 380.5 726.3 381.6C726.7 382.8 725.7 386 726 387C726.3 388 728 389.6 728.9 390C729.7 390.3 732.5 389.4 733.3 389.8C734.2 390.1 735.4 392.4 736.1 392.9C736.9 393.4 739.1 393.8 740 393.9C740.9 394 743.4 393.7 744.2 394.2C744.9 394.7 745.7 397.8 746.5 398.2C747.3 398.6 750.3 397.3 751.2 397.6C752 397.9 753.6 400 753.9 400.8C754.2 401.6 753.2 403.7 753.4 404.5C753.5 405.4 754.6 407.2 755.3 407.8C756 408.4 758.6 408.7 759.3 409.3C759.9 410 760.2 413.4 760.8 413.3C761.4 413.2 763.6 409.4 764.5 408.5C765.4 407.6 768 405.8 768.5 406C769 406.2 768.8 409.5 769.2 410.5C769.6 411.4 771.6 414.1 772 414C772.4 413.9 772.1 410.6 772.5 409.8C773 409.1 775.1 407.2 776 407.5C776.9 407.8 779.6 412.2 780.5 412.5C781.4 412.8 783.5 410.6 783.9 409.8C784.4 409 784 405.7 784.5 405.5C785 405.3 787.3 407.2 787.8 408C788.3 408.8 788.4 411.8 789 412C789.6 412.2 792.1 409.3 793 409.5C793.9 409.7 796.2 413.8 797 414C797.8 414.2 799.6 412.2 800 411.4C800.4 410.7 799.9 407.7 800.5 407.5C801.1 407.3 804.5 409.3 805 409.5M844 405.5C844.5 405.2 847.1 402.6 848 403C848.9 403.4 851.1 408.4 852 408.5C852.9 408.6 855.2 404.1 856 404C856.8 403.9 857.9 406.9 858.7 407.6C859.5 408.2 861.8 409.5 862.8 409.2C863.8 408.9 865.8 406 866.8 405.3C867.9 404.5 870.9 403.2 872 403C873.1 402.8 875.3 403.7 876.1 403.4C877 403.1 878.7 401.4 879.4 400.8C880.1 400.2 881.5 398.7 882.3 398.3C883.1 397.9 885.1 397.4 886 397.5C886.9 397.6 888.8 398.9 889.7 398.9C890.5 398.9 892.4 398 893.3 397.4C894.2 396.8 896 394.2 897 393.5C898 392.8 900.7 392.3 901.7 391.8C902.8 391.3 905 389.9 906 389.5C907 389.1 909.7 388.9 910 388.3C910.3 387.7 908.8 385 908.5 384C908.2 383 907.4 380.5 907.2 380" fill="none" stroke="#000" stroke-linecap="round" stroke-linejoin="round" stroke-width="1.35"/>
<path d="M817 290L830 290L834 311L828 325L836 338L845 350L822 356L800 352L813 344L814 338L821 335L816 326L821 313z" fill="#3c9b50"/>
<path d="M722.9 243.7C722.1 243.1 719.5 241.7 718.3 241.3C717.2 241 714.4 240.7 713.2 240.9C712 241.1 709.2 243.2 707.9 243.4C706.6 243.5 703.1 243 702.1 242.3C701.1 241.6 700.3 237.6 699.3 237.4C698.3 237.2 694.8 240 693.8 240.9C692.8 241.8 692 244.8 691 245C690 245.2 686.5 242 685.4 242.3C684.3 242.6 682.3 247.6 681.3 247.8C680.2 248 677.7 243.7 676.4 243.7C675.1 243.7 671.5 247.1 670.2 247.8C668.9 248.5 666.5 249.2 665.5 249.8C664.5 250.5 663 252.7 661.8 253.4C660.6 254.1 655.9 254.4 654.9 255.5C653.9 256.6 654.3 261.4 653.5 263.1C652.7 264.8 649.5 268.9 647.9 270C646.3 271.1 640.4 271.9 639.6 272.8C638.8 273.7 640.8 276.7 640.8 277.8C640.7 279 638.9 281.1 638.9 282.6C638.9 284.1 641.4 289.9 641 290.9C640.6 291.9 636.5 291.1 635.2 291.5C633.9 291.8 630.2 293.2 629.9 293.7C629.6 294.2 632.2 295.2 632.5 295.9C632.8 296.7 631.8 299.3 632.2 299.9C632.6 300.6 635.4 300.9 635.9 301.5C636.5 302.1 637.4 304.3 636.8 304.8C636.2 305.3 632 305 630.7 305.5C629.5 306 625.8 308 625.7 308.9C625.6 309.8 628.9 312 629.6 313.2C630.2 314.3 631.9 317.7 631.3 318.7C630.7 319.7 624.9 320.7 624.3 321.5C623.7 322.3 625.1 324.7 625.8 325.3C626.4 325.9 629.3 326.3 629.9 326.9C630.4 327.6 630.3 330.3 630.8 331.1C631.3 331.9 633.9 332.4 634 333.5C634.1 334.6 631 338.7 631.3 340.3C631.6 341.9 635.6 346.1 636.8 347.3C638 348.5 640.7 349.4 641.6 350.4C642.4 351.4 643 355 643.8 355.6C644.6 356.2 647.4 355.6 648.5 355.4C649.5 355.2 651.7 353 652.8 353.5C653.9 354 656.5 359.3 657.7 359.8C658.9 360.3 662 357.8 663.2 357.7C664.4 357.6 666.9 358.7 667.9 359.3C668.9 359.8 670.9 361.6 671.6 362.6C672.3 363.6 673.2 367.8 674.3 368.1C675.4 368.4 680 365 681.3 365.3C682.6 365.6 683.9 370.5 685.4 370.9C686.9 371.3 692.4 368.7 693.8 368.8C695.2 368.9 696.6 371.4 697.5 371.9C698.5 372.5 700.6 373.2 702.1 373.7C703.6 374.2 709 376.2 710.4 375.8C711.8 375.4 712.8 371.6 713.8 370.5C714.8 369.5 717.3 367 718.8 366.7C720.3 366.4 725.6 367.6 727.1 368.1C728.6 368.6 730.3 370.8 731.5 371.3C732.6 371.8 735.5 372.4 736.8 372.3C738.1 372.2 741.5 370.3 743 370.2C744.4 370.2 747.8 371.5 749.3 371.6C750.8 371.7 754.1 371.3 755.5 370.9C756.9 370.5 759.5 368.6 761 368C762.5 367.4 766.5 366.3 768 366C769.5 365.7 772.3 365.4 773.6 365.5C774.8 365.5 777.8 366.8 779 366.7C780.2 366.6 782.8 365.2 783.8 364.4C784.8 363.7 786.7 361.3 787.4 360.5C788.1 359.7 789.2 357.6 790 357.2C790.8 356.9 793.6 358.1 794.4 357.8C795.3 357.4 796.2 354.8 797 354.3C797.8 353.9 800.1 354.2 801 354C801.9 353.8 804.1 353.5 804.8 353C805.5 352.4 806.1 349.6 806.8 349.1C807.6 348.6 810.4 349.3 811.2 348.9C812 348.5 813.3 346.9 813.8 345.9C814.3 344.9 814.2 341.4 815.2 340.3C816.2 339.2 821.8 337.7 822.1 336.9C822.4 336.1 818.7 334.2 818.1 333.1C817.4 332.1 816.5 328.7 816.6 327.8C816.7 326.9 819 326 819.2 325.2C819.4 324.4 818 321.8 818.4 321.1C818.8 320.4 821.9 319.8 822.3 319.1C822.7 318.4 822.5 316.3 822.1 315.3C821.7 314.3 819.2 311.8 818.7 310.6C818.2 309.3 817.7 306.1 817.8 304.8C817.9 303.5 819.2 300.8 819.3 299.5C819.5 298.2 819.5 294.7 819 294C818.5 293.3 815.9 293.8 815.2 293.3C814.4 292.8 813.3 290.1 812.5 289.8C811.7 289.5 808.8 291 808 290.7C807.1 290.4 806.1 287.7 805.3 287.4C804.4 287.1 801.6 288.5 800.8 288.1C800 287.7 799.2 284.5 798.4 284.1C797.6 283.7 794.8 285.2 793.9 284.9C793 284.7 791.6 282.7 791 282C790.4 281.3 789.6 279.1 788.9 278.7C788.1 278.4 785.4 279.4 784.6 279C783.9 278.7 783.3 276 782.6 275.6C781.9 275.2 779.1 276.2 778.4 275.8C777.7 275.4 777.2 272.6 776.5 272.2C775.8 271.8 773.1 272.6 772.4 272.2C771.7 271.7 771.2 269.1 770.5 268.6C769.8 268.2 767.1 269 766.5 268.5C765.8 268 765.4 265 764.8 264.5C764.1 264 761.9 264.1 761 264C760.1 263.9 757.7 264.4 757 263.9C756.3 263.4 755.9 260 755.2 259.6C754.5 259.1 751.6 260.4 750.9 260.1C750.1 259.7 749.3 257.1 748.6 256.6C747.9 256.2 745.4 256.8 744.7 256.4C744 255.9 743.1 253.4 742.4 253C741.6 252.7 738.9 253.7 738.2 253.3C737.4 253 736.6 250.3 735.9 250C735.1 249.6 732.3 250.7 731.6 250.3C730.9 249.9 730.4 246.7 729.7 246.3C729 245.9 726.2 247 725.4 246.7C724.6 246.4 723.7 244.3 722.9 243.7z" fill="#62d566"/>
<path d="M913.8 254.8C914.3 254.1 914.5 250.9 914.3 249.7C914.2 248.6 911.9 245.5 912.4 245C912.9 244.5 917.7 245.3 919 245.5C920.3 245.7 922.4 246.2 923.2 246.8C924 247.5 924.9 250.2 925.8 250.7C926.6 251.2 929.7 250.6 930.6 251.1C931.4 251.5 932.5 254.6 933.2 254.8C933.9 255 935.9 253.8 936.5 253.2C937.1 252.6 937.5 250 938.2 249.6C938.9 249.2 941.9 249.8 942.6 249.4C943.3 248.9 943.5 245.8 944.3 245.8C945.1 245.8 948.2 248.7 949.1 249.7C950.1 250.8 951.6 254.4 952.7 254.8C953.8 255.2 957.2 253.5 958.3 252.8C959.4 252.1 961.3 248.3 962.4 248.5C963.5 248.7 966.6 254.1 967.9 254.8C969.2 255.5 972.5 254.5 973.8 254.8C975.1 255.1 977.9 256.5 979 257.6C980.1 258.7 982.3 263.5 983.2 264.5C984.1 265.5 985.9 266.2 986.8 266.3C987.7 266.5 990.2 265.5 991.1 265.8C991.9 266.1 993.4 268.8 994.3 269.1C995.1 269.4 998.2 267.8 998.5 268.7C998.8 269.6 996.5 276.4 997.1 277C997.7 277.6 1003.2 273.5 1004 274.2C1004.8 274.9 1003.6 281.5 1004 282.6C1004.4 283.7 1006.9 282.8 1007.5 283.3C1008 283.8 1008.4 286.5 1009 287C1009.7 287.4 1012.2 286.7 1012.9 287C1013.6 287.3 1015.4 288.9 1015.2 289.5C1015 290.1 1011.8 291.4 1011 292.2C1010.2 293 1007.7 295.3 1008.2 296.4C1008.7 297.5 1014.9 300.5 1015.2 302C1015.5 303.5 1011 307.3 1011 308.9C1011 310.5 1015.4 314.3 1015.2 315.9C1015 317.5 1010.1 321.5 1009.6 322.8C1009.1 324.1 1011 326.1 1011 327C1011 327.9 1010.3 329.6 1009.7 330.2C1009.2 330.7 1006.7 331 1006.3 331.7C1005.9 332.3 1006.9 335.3 1006.4 335.9C1005.9 336.5 1002.7 336.3 1002.2 336.9C1001.7 337.5 1002.6 340.4 1002.3 341C1001.9 341.7 1000.2 342.1 999 342.7C997.8 343.3 992.7 345.2 992.1 346.2C991.5 347.2 992.9 350.4 993.5 351.6C994.1 352.7 997.1 355.2 997 355.9C996.9 356.6 993.5 357.5 992.5 357.5C991.4 357.5 989.1 355.8 987.9 355.9C986.7 356 983.4 357.8 982.4 358.7C981.4 359.6 980 362.1 979.5 363.2C979 364.3 979.3 367.9 978.2 368.4C977.1 368.9 971.4 367.2 969.9 367.7C968.4 368.2 966.8 372.6 965.7 372.6C964.7 372.6 961.9 367.5 960.9 367.7C959.9 367.9 958.5 373.7 957.4 373.9C956.3 374.1 952.8 369.5 951.8 369.8C950.8 370.1 950.1 376.5 949 376.7C947.9 376.9 943.1 371.5 942.1 371.2C941.1 370.9 941.1 373.8 940.4 374.2C939.8 374.7 937.1 374.4 936.5 374.9C936 375.5 936.4 378.5 935.9 379.1C935.4 379.7 933 380.7 932.4 380.2C931.8 379.7 931.6 376.2 931 375.1C930.4 374.1 928.3 370.9 927.5 371.2C926.7 371.5 925 378 924 378.1C923 378.2 919.6 372.4 918.5 371.9C917.4 371.4 915.8 373.6 914.9 373.8C914 373.9 911.6 373 910.7 373.2C909.8 373.5 908.2 375.6 907.3 375.9C906.4 376.3 904 376.8 903.2 376C902.4 375.2 901.2 369.8 900.4 369.1C899.6 368.4 897.2 369.5 896.4 370.1C895.7 370.6 894.9 373.5 894.1 373.9C893.3 374.4 890.4 373.6 889.6 373.9C888.7 374.3 887.4 376.8 886.6 376.7C885.8 376.6 883 374.5 882.4 373.5C881.7 372.5 881.9 368.9 881 368.4C880.1 367.9 876.3 368.9 875.1 369.5C873.9 370.2 871.7 373.6 870.7 373.7C869.7 373.8 867.5 371.6 866.7 370.8C865.8 370 864.5 367.8 863.8 366.7C863.1 365.6 861.5 362.2 860.5 361.1C859.5 359.9 856.4 357.7 855.4 357C854.4 356.3 852.6 356 852.1 355.4C851.6 354.8 851.6 352.2 851.1 351.6C850.5 351 848.1 350.9 847.5 350.3C846.9 349.8 846.6 347.9 846 347C845.4 346.1 843.4 343 842.4 342.3C841.3 341.5 837.4 341.2 836.7 340.3C836 339.4 836.9 335.8 836 334.8C835.1 333.8 830 332.9 829 332C828 331.1 827.6 328.4 827.5 327.3C827.3 326.1 827.1 323.2 827.7 322.3C828.3 321.4 831.9 320.1 832.8 319.1C833.8 318.2 836.3 315.4 836 314C835.7 312.6 831.1 308.6 830.4 307C829.7 305.4 829.3 301.2 829.6 300C829.9 298.8 831.8 297.5 832.7 297.1C833.6 296.7 836.5 297.1 837.2 296.5C838 295.9 838.6 292.6 839.4 292C840.2 291.5 843.3 292.3 844.2 291.9C845.1 291.5 846.2 289.1 847 288.5C847.8 287.9 850.1 287.3 851 287C851.9 286.7 853.7 286.7 854.4 286.3C855 285.8 855.9 283.5 856.6 283.2C857.3 282.8 859.6 283.5 860.4 283.2C861.1 282.9 862 280.8 862.7 280.5C863.5 280.2 865.9 281.1 866.6 280.7C867.2 280.2 867.8 277.3 868.4 276.9C869.1 276.5 871.8 277.9 872.5 277.6C873.3 277.3 873.9 274.6 874.6 274.3C875.3 273.9 877.9 275.1 878.6 274.8C879.4 274.5 880.4 272.6 881 272C881.6 271.4 883.1 269.8 883.9 269.5C884.7 269.2 887.3 269.8 888 269.4C888.8 269 889.6 266.4 890.4 266C891.2 265.6 893.9 266.5 894.6 266C895.3 265.5 895.8 262.3 896.6 261.8C897.3 261.4 900.2 262.5 900.9 262.2C901.7 261.8 902.5 259.1 903.3 258.8C904.1 258.4 906.9 259.5 907.7 259.1C908.5 258.8 909.4 256.2 910.1 255.7C910.8 255.2 913.3 255.5 913.8 254.8z" fill="#62d566"/>
<path d="M817 290L830 290L834 311L828 325L836 338L845 350L822 356L800 352L813 344L814 338L821 335L816 326L821 313z" fill="#3c9b50"/>
<path d="M721.9 241.7C721.3 241.3 718.8 239.3 717.5 238.9C716.2 238.5 713.6 238.6 712.2 238.9C710.8 239.2 708.3 240.7 706.8 240.9C705.3 241.1 702.2 241 701.1 240.3C700 239.6 699.4 235.6 698.3 235.4C697.2 235.2 693.9 237.9 692.8 238.9C691.7 239.9 691.1 242.8 690 243C688.9 243.2 685.7 239.9 684.4 240.3C683.1 240.7 681.5 245.6 680.3 245.8C679.1 246 676.6 242.1 675.4 241.7C674.2 241.3 672.3 242 671.5 242.5C670.7 243.1 670 244.9 669.2 245.8C668.4 246.7 666.7 248.7 665.6 249.5C664.5 250.2 662 251.2 660.8 251.4C659.6 251.6 657.8 250.5 656.8 250.8C655.9 251.1 654.2 252.6 653.9 253.5C653.6 254.4 655.1 256.6 654.9 257.6C654.7 258.6 653.4 260.3 652.5 261.1C651.6 261.9 649.2 262.6 648.5 263.6C647.7 264.5 647.6 267.1 646.9 268C646.2 268.9 644.2 270 643.1 270.4C642 270.7 639.4 270.1 638.6 270.8C637.8 271.5 636.9 274.3 636.8 275.6C636.7 276.9 637.5 279.4 637.9 280.6C638.3 281.8 639.8 283.3 640.1 284.5C640.4 285.6 640.8 288.3 640 288.9C639.2 289.5 635.7 288.8 634.2 289.2C632.7 289.6 629.2 291.1 628.9 291.7C628.6 292.3 631.9 292.6 632.2 293.5C632.5 294.3 630.8 297.2 631.2 298C631.5 298.8 634.2 298.9 634.8 299.6C635.4 300.2 636.5 302.3 635.8 302.8C635.1 303.3 631.1 302.6 629.6 303.2C628.1 303.7 624.8 305.8 624.7 306.9C624.6 308 628.1 309.7 628.8 311C629.6 312.4 630.6 315.9 630.3 316.7C630 317.5 627.3 316.5 626.3 316.9C625.4 317.3 623.3 318.9 623.3 319.5C623.3 320.1 626.1 320.9 626.6 321.8C627.2 322.7 626.6 325.4 627.3 326.2C627.9 327 630.9 326.9 631.6 327.7C632.4 328.4 633.2 330.6 633 331.5C632.8 332.4 630.5 333.4 630.2 334.3C629.8 335.2 629.7 337.4 630.3 338.3C630.9 339.2 633.6 339.9 634.3 340.8C635 341.8 635.2 344.1 635.8 345.3C636.4 346.5 637.6 349 638.5 350.1C639.5 351.2 641.7 353.5 642.8 353.6C643.9 353.7 645.7 351.2 646.9 350.9C648.1 350.6 651 350.8 651.8 351.5C652.6 352.2 652.1 355 652.7 355.8C653.4 356.7 655.4 357.8 656.7 357.8C658 357.8 660.8 355.9 662.2 355.7C663.6 355.5 666.3 355.8 667.4 356.5C668.5 357.1 669.8 359.3 670.6 360.6C671.4 361.9 672.4 365.4 673.3 366.1C674.2 366.8 676.4 366.5 677.4 366.1C678.3 365.7 679.4 362.9 680.3 363.3C681.2 363.7 683.3 368.4 684.4 368.9C685.5 369.4 687.3 367.3 688.4 367C689.5 366.7 691.7 366.4 692.8 366.8C693.9 367.2 695.4 369.3 696.5 370C697.6 370.6 699.9 371.5 701.1 371.7C702.3 371.9 704.4 371.5 705.5 371.8C706.6 372.1 708.1 374 709.4 373.8C710.7 373.6 713.9 371.7 715 370.5C716.1 369.3 716.8 365.5 717.8 364.7C718.8 363.9 721 364.1 722.1 364.2C723.3 364.4 725 365.4 726.1 366.1C727.2 366.8 729.2 368.8 730.5 369.3C731.7 369.9 734.3 370.5 735.8 370.3C737.3 370.1 740.3 368.2 741.9 368.1C743.6 368 746.6 369.5 748.3 369.6C750 369.7 752.9 369.4 754.5 368.9C756.1 368.5 758.9 366.7 760 366C761.1 365.3 762.2 363.9 763.1 363.6C764 363.3 765.8 363.7 767 364C768.2 364.3 770.9 365.6 772.4 365.7C773.9 365.8 776.8 365.3 778 364.7C779.2 364.1 780.5 361.7 781.7 360.9C782.8 360 785.2 358.9 786.4 358.5C787.6 358.1 789.6 358.8 790.4 358.2C791.3 357.6 791.8 354.6 792.7 354.1C793.5 353.6 796.1 354.8 797 354.5C798 354.3 799.3 352.7 800 352C800.7 351.3 801.7 349.5 802.6 349.1C803.5 348.6 806 349.2 806.9 348.7C807.8 348.2 808.3 345.8 809.1 345.2C809.9 344.5 812.1 344.8 812.8 343.9C813.5 343 813.5 339.1 814.2 338.3C814.9 337.5 817.3 338.3 818.3 337.9C819.2 337.4 821.3 335.8 821.1 334.9C820.9 334 817.6 332.5 816.8 331.3C816.1 330 815.4 326.9 815.6 325.8C815.8 324.7 818.2 324.2 818.4 323.3C818.7 322.4 817 320 817.4 319.1C817.8 318.3 820.9 317.9 821.4 317.1C821.9 316.4 821.5 314.5 821.1 313.3C820.7 312.1 818.6 309.8 818 308.4C817.4 307 816.7 304.2 816.8 302.8C816.9 301.4 818.7 299 818.9 297.6C819 296.1 818.1 292.7 818 292M912.8 252.8C912.9 252.1 913.6 249 913.4 247.7C913.2 246.4 910.8 243.6 911.4 243C912 242.4 916.5 243.3 918 243.5C919.5 243.7 921.5 243.8 922.4 244.6C923.2 245.4 923.4 248.6 924.4 249.3C925.3 249.9 928.4 248.9 929.4 249.3C930.4 249.8 931.3 252.5 932.2 252.8C933.1 253.1 935.2 252.4 935.9 251.6C936.5 250.9 936.4 248.1 937.1 247.5C937.8 246.8 940.4 247.4 941.2 246.9C942 246.4 942.3 243.7 943.3 243.8C944.3 243.9 947.4 246.1 948.5 247.3C949.7 248.5 950.5 252.3 951.7 252.8C952.9 253.3 956.1 251.8 957.4 250.9C958.7 250.1 960.3 246.8 961.4 246.5C962.5 246.2 964.7 247.7 965.5 248.5C966.2 249.4 966 251.9 966.9 252.8C967.8 253.7 970.7 254.7 972.2 255.1C973.7 255.5 976.8 255.2 978 255.6C979.2 256 980.5 257.5 981.1 258.4C981.7 259.4 981.6 261.7 982.2 262.5C982.8 263.3 984.7 264.3 985.8 264.5C986.8 264.6 989.2 263 990.2 263.4C991.2 263.8 992.3 266.8 993.2 267.2C994.2 267.6 996.9 266.2 997.5 266.7C998.1 267.2 997.9 269.9 997.7 271C997.5 272.1 995.8 274.4 996.1 275C996.4 275.6 999.4 275.8 1000.3 275.4C1001.2 275 1002.4 272.1 1003 272.2C1003.6 272.3 1004.9 275.3 1004.9 276.4C1004.9 277.5 1003 279.6 1003 280.6C1003 281.6 1004.2 283.3 1005 283.7C1005.8 284 1008.4 282.7 1009.2 283.1C1010 283.5 1010.2 286.1 1010.9 286.6C1011.5 287.2 1014.1 286.8 1014.2 287.5C1014.3 288.2 1012.2 290.6 1011.3 291.6C1010.4 292.5 1007.4 293.5 1007.2 294.4C1007 295.3 1008.9 297.6 1009.8 298.3C1010.7 299.1 1013.8 299.3 1014.2 300C1014.6 300.7 1013.4 303 1012.9 303.9C1012.3 304.8 1010.2 306 1010 306.9C1009.8 307.8 1010.6 310 1011.2 310.9C1011.8 311.9 1014.1 313 1014.2 313.9C1014.3 314.8 1013 317.1 1012.3 318.1C1011.5 319 1008.9 319.9 1008.6 320.8C1008.3 321.7 1010.2 324.2 1010 325C1009.8 325.8 1007.7 326.3 1007.3 327.1C1006.9 327.9 1007.3 330.1 1006.8 330.8C1006.2 331.5 1003.4 331.3 1002.9 332C1002.4 332.8 1003.5 335.5 1003 336.2C1002.5 336.9 999.5 336.6 998.9 337.2C998.2 337.8 998.5 339.8 998 340.7C997.5 341.6 996.2 343.4 995.3 343.8C994.3 344.3 991.5 343.4 991.1 344.2C990.7 345 991.6 348.4 992.3 349.7C993 351 996.1 353.1 996 353.9C995.9 354.7 992.7 355.5 991.5 355.5C990.2 355.5 988.2 353.7 986.9 353.9C985.6 354.1 982.6 355.8 981.4 356.7C980.2 357.6 978.6 359.7 978.1 361C977.5 362.3 977.9 365.6 977.2 366.4C976.5 367.2 974.1 367.3 973 367.2C971.8 367.1 970 365.2 968.9 365.7C967.8 366.2 965.9 370.6 964.7 370.6C963.5 370.6 961 366.1 959.9 365.7C958.8 365.3 956.9 367 956.4 367.8C956 368.7 957.2 371.9 956.4 371.9C955.6 371.9 951.5 367.8 950.8 367.8C950.1 367.8 951.6 371.1 951.2 372C950.8 372.9 948.7 374.9 948 374.7C947.3 374.5 946.6 371.3 945.7 370.6C944.7 369.8 941.9 368.9 941.1 369.2C940.3 369.5 940.5 372.1 939.8 372.6C939.1 373.2 936.4 372.5 935.7 373.1C935 373.6 935.1 376.1 934.6 376.8C934 377.4 932 378.7 931.4 378.2C930.8 377.7 930.6 374.3 930 373.1C929.3 371.9 927.1 369.2 926.5 369.2C925.9 369.2 926 372.1 925.6 373.1C925.1 374 923.5 376.3 923 376.1C922.5 375.9 922.3 372.7 921.5 371.9C920.8 371 918.5 369.9 917.5 369.9C916.5 369.9 915.1 372.1 914 372.2C912.9 372.3 910.5 370.5 909.5 370.7C908.5 371 907.3 373.8 906.4 374.2C905.4 374.6 902.7 374.6 902.2 374C901.7 373.4 902.9 370.8 902.6 369.8C902.2 368.9 900.2 367 899.4 367.1C898.6 367.2 897.8 370.1 896.8 370.6C895.9 371 893.2 370 892.2 370.4C891.3 370.8 890.5 373.2 889.6 373.7C888.7 374.3 886.3 375.3 885.6 374.7C884.9 374.1 885.1 370.6 884.3 369.5C883.6 368.4 881.2 366.3 880 366.4C878.8 366.5 876.8 369.6 875.5 370.3C874.1 371 870.7 372.2 869.7 371.7C868.7 371.2 868.6 367.8 867.6 366.8C866.7 365.9 864.1 365.5 862.8 364.7C861.5 363.9 858.7 362 857.6 360.7C856.5 359.4 855.1 356.2 854.4 355C853.7 353.8 853.5 352.4 852.7 351.9C852 351.3 849.5 351.5 848.9 350.7C848.4 350 849.1 347.1 848.6 346.3C848.1 345.6 846.2 345.5 845 345C843.8 344.5 840.9 343.5 839.7 342.6C838.4 341.7 836.3 339.6 835.7 338.3C835.1 337 835.5 333.8 835 332.8C834.5 331.8 832.8 330.9 831.8 330.5C830.9 330.2 828.8 330.7 828 330C827.2 329.3 826.3 326.6 826.1 325.3C826 324 825.9 321.3 826.7 320.3C827.5 319.3 831.1 318.6 832.2 317.5C833.3 316.4 835.2 313.1 835 312C834.8 310.9 831.6 310.5 830.9 309.6C830.1 308.6 829.5 306.1 829.4 305C829.3 303.9 830.1 302.3 830 301.4C829.9 300.5 828.8 298.5 828.6 298" fill="none" stroke="#000" stroke-linecap="round" stroke-linejoin="round" stroke-width="1.35"/>
<path d="M789.4 489.5L800.7 476.8L802.4 459.4L805.6 440L805.8 388L803 372L760 330.5L707 338.5L690 357.5L681 359L676.5 352L694 332L673 322L671.5 315L679 310L703 322L730 317L708 301L686 285L660 280L657 272L662 266L690 271L691.5 257L697 250L707 254L705 276L717 288L744 307L757 308L760 294L765 288L771 290L774 311L822 352L855 313L856.5 296L860 288L868 290L871 301L893 288L900 272L906 262L916 267L912 284L941 292L958 274L965 271L974 278L956 299L968 310L1000 321L1001 328L996 335L964 326L960 350L955 353L945 349L949 318L930 306L905 305L877 322L850 362L843.5 375L843.2 440L843.2 468L846 489.5z" fill="#bd7e46"/>
<path d="M717 239C716.9 238.2 720.6 236.9 721.4 236.1C722.2 235.2 724 232.1 723.9 231.4C723.8 230.7 720.9 231 720.4 230.4C719.8 229.9 719.9 226.9 719.4 226.4C718.8 225.9 716.2 226.2 715.5 225.8C714.8 225.4 712.8 223.7 713.5 223C714.2 222.3 721.3 220.4 721.8 219.6C722.3 218.8 717.5 216.6 717.7 216.1C717.9 215.6 722.1 215.8 723.4 215.5C724.7 215.1 728.3 213.9 728.8 213.3C729.3 212.7 727.9 211.1 728.1 210.2C728.3 209.4 729.6 206.6 730.3 205.7C731 204.8 734.1 203.8 734.3 202.7C734.5 201.6 731.2 197 731.6 196.3C732 195.7 736.2 196.9 737.6 196.8C739 196.7 742.8 196 743.4 195.2C744 194.4 742.2 190.7 742.7 190C743.2 189.3 746.7 189 747.8 189.2C749 189.4 751.4 192 752.4 191.7C753.4 191.3 755.5 186.9 756.6 186.5C757.7 186.1 761.4 188.7 762.1 188.2C762.8 187.8 761.8 183.5 762.8 183C763.8 182.5 770 184.6 771.1 184.2C772.2 183.8 771.8 180 772.5 179.6C773.2 179.2 775.3 180.9 776.7 180.7C778.1 180.4 782.8 177.4 784.3 177.2C785.8 177.1 788.3 179.4 789.9 179.6C791.5 179.8 796.7 179.1 798.2 179C799.7 178.9 802 179 803 178.6C804 178.2 805.6 176.1 806.6 175.5C807.6 174.9 810.2 173.9 811.3 173.8C812.4 173.7 814.8 174.2 816.2 174.9C817.6 175.7 821.4 180 823.1 180.2C824.8 180.3 829.2 176.1 830.8 176.1C832.4 176.1 835.9 180.3 837 180.2C838.1 180 839.9 175 840.5 174.9C841.1 174.9 841.8 178.8 842.5 179.8C843.2 180.7 845.6 182.4 846.7 183C847.8 183.6 851 185.2 852.3 184.8C853.6 184.3 856.7 179.3 857.8 179C858.9 178.7 860.6 181 862 181.8C863.4 182.6 868.1 185.7 869.6 185.9C871.1 186.1 874 183 875.2 183.6C876.4 184.2 879 189.9 880.1 191.1C881.2 192.2 883.6 193.3 884.9 193.4C886.2 193.5 890.1 191.4 891.2 191.7C892.3 191.9 894.4 194.6 894.6 195.8C894.8 196.9 892 200.9 892.6 201.5C893.2 202.1 897.9 200.8 899.5 201C901.1 201.2 905.9 202.1 906.7 202.9C907.5 203.7 907 206.9 906.7 208C906.4 209.1 903.8 211.3 903.9 212.2C904 213.1 906.3 215.1 907.3 215.8C908.2 216.4 911.6 216.8 911.7 217.8C911.8 218.8 908.2 223 908.1 224C908 225 911.1 225.2 910.9 226C910.7 226.8 906.6 229.6 906.7 230.6C906.8 231.6 911 233.6 911.6 234.7C912.2 235.8 912 238.7 911.8 239.9C911.5 241 909.7 243.3 909.5 244.5C909.3 245.7 909.9 248.6 910.4 249.7C910.8 250.9 913.1 253.4 913 254.3C912.9 255.2 910.4 257.2 909.4 257.6C908.4 258.1 905.6 257.2 904.5 257.8C903.4 258.4 901.1 261.3 900.3 262.5C899.5 263.7 897.8 266.9 897.5 268.2C897.2 269.5 897.7 272.4 897.5 273.7C897.3 275 896.2 278.4 895.4 279.5C894.6 280.6 892 282.5 890.6 283.4C889.2 284.3 885.1 287.3 883.7 287.6C882.3 287.9 880.1 286.2 878.9 286.1C877.8 285.9 875 285.5 873.9 286.2C872.8 286.9 871 291 869.8 291.8C868.6 292.6 865 293.3 863.5 293.3C862.1 293.3 858.5 291.5 857.3 291.8C856.1 292.1 853.8 294.9 853.1 295.9C852.4 296.9 852.6 299.7 851.7 300.1C850.8 300.5 846.9 299 845.5 299C844 299 840.4 300.1 839.2 300.1C838 300.1 836.4 298.3 835.1 298.7C833.8 299.1 829.5 303.2 828.1 303.5C826.7 303.8 824.2 302.1 823.2 301.4C822.3 300.6 820.6 297.4 819.8 297.3C819 297.2 816.7 299.8 816.2 300.8C815.7 301.7 816.6 305 815.6 305.7C814.6 306.4 808.9 307.4 807.4 307.1C805.9 306.8 803.6 303.9 802.6 302.7C801.6 301.6 800 298 799 297.3C798 296.6 795.2 296.7 794.1 296.8C793 296.9 790.2 297 789.3 298C788.4 299 787.4 305.5 786.6 305.7C785.8 305.9 784 301.4 782.7 300.1C781.4 298.8 777.1 295.1 775.7 294.5C774.3 293.9 771.6 295.4 770.5 295.2C769.4 295 767 293.1 766 292.5C765 291.9 762.6 290.2 761.5 289.8C760.4 289.5 757.4 290 756.3 289.7C755.2 289.4 753.3 288 752.1 287.6C750.9 287.2 747.5 286.8 746.2 286.3C744.9 285.8 741.6 284.5 741 283.4C740.4 282.3 741.8 277.8 741 276.5C740.2 275.2 735 273.4 734 272.3C733 271.2 733.3 268 732.7 266.8C732.1 265.6 730 262.6 728.9 261.8C727.7 261 723.6 260.8 722.9 259.8C722.2 258.8 722.3 254.6 722.6 253.2C722.9 251.7 725.8 248.5 725.7 247.3C725.6 246.1 723 243.5 722 242.5C721 241.5 717.1 239.8 717 239z" fill="#9deb80"/>
<path d="M716 239C716.1 238 719.3 236.9 720.2 235.9C721.1 234.9 723 232.1 722.9 231.4C722.8 230.7 720 231.1 719.4 230.5C718.8 229.8 719.1 226.9 718.4 226.4C717.7 225.8 714.8 226.8 714.1 226.4C713.3 225.9 712.1 223.6 712.5 223C712.9 222.4 715.9 222.7 717 222.2C718.1 221.7 720.8 220.4 720.8 219.6C720.8 218.8 716.5 216.9 716.7 216.1C716.9 215.3 720.5 214.1 722 213.7C723.5 213.3 727.1 213.8 727.8 213.3C728.5 212.8 726.7 210.9 727.1 209.9C727.5 208.9 730.1 207.1 731 205.9C731.8 204.7 733.3 202.5 733.3 200.8C733.3 199.1 730.2 194.4 730.6 193.2C731 192 734.8 191.7 736.4 191.5C738 191.3 741.7 192.6 742.4 191.8C743.1 191 741.2 186.1 741.7 185.6C742.2 185.1 744.9 187.8 746.2 188.1C747.5 188.4 750.2 188.5 751.4 187.6C752.6 186.7 754.3 181.9 755.6 181.4C756.9 180.9 760.3 184.1 761.1 183.5C761.9 182.9 760.6 177.9 761.8 177.2C763 176.5 768.8 179.1 770.1 178.6C771.4 178.1 770.8 173.7 771.5 173.1C772.2 172.5 774.7 174.6 775.7 174.4C776.7 174.2 778.1 172.1 779.1 171.5C780.1 171 782 170.1 783.3 170.3C784.6 170.5 787 172.8 788.9 173.1C790.8 173.4 795.5 172.6 797.2 172.4C798.9 172.2 800.9 172.1 802 171.5C803.1 170.9 804.4 168.8 805.6 168.2C806.8 167.6 809.6 166.9 811.1 166.8C812.6 166.8 815.6 166.9 816.7 167.5C817.8 168.1 818.5 170.6 819.4 171.5C820.3 172.3 822.6 174 823.6 173.8C824.6 173.6 825.8 171 826.8 170.3C827.8 169.7 829.9 168.4 831.3 168.9C832.7 169.4 836.2 174 837.5 173.8C838.8 173.6 840.3 167.6 841 167.5C841.7 167.4 841.9 171.9 842.7 173.2C843.5 174.5 845.9 176.4 847.2 177.2C848.5 178 851.8 179.6 852.8 179.3C853.8 179 853.7 175.9 854.4 175C855.2 174 857.2 172.3 858.3 172.4C859.4 172.5 861.5 174.9 862.5 175.8C863.5 176.7 864.9 178.3 865.9 178.9C866.9 179.6 868.8 180.8 870.1 180.7C871.4 180.6 874.5 177.7 875.7 177.9C876.9 178.1 878.4 180.7 879.1 181.9C879.7 183.1 879.8 185.9 880.6 186.9C881.4 187.9 883.9 189.6 885.4 189.7C886.9 189.8 890.4 187.2 891.7 187.6C893 188 894.9 190.9 895.1 192.5C895.3 194.1 892.4 198.6 893.1 199.4C893.8 200.2 898.1 198.6 900 198.8C901.9 199 906.5 200.1 907.2 201.1C907.9 202.1 905.3 204.9 904.9 206.4C904.5 207.9 903.8 211.2 904.4 212.2C905 213.2 908.2 212.9 909.3 213.6C910.3 214.4 912.3 216.4 912.2 217.8C912.1 219.2 908.7 222.9 908.6 224C908.5 225.1 911.6 225.1 911.4 226C911.2 226.9 907.1 229.4 907.2 230.6C907.3 231.8 911.8 233.7 912.1 234.7C912.4 235.7 909.8 237.3 909.5 238.5C909.2 239.6 909.5 241.8 910 243C910.5 244.2 912.8 246 913.3 247.4C913.7 248.7 914.1 252 913.5 252.8C912.9 253.6 909.8 252.6 908.6 253C907.5 253.5 905.8 255.1 905 256.3C904.2 257.5 903.7 261 902.8 262.4C901.9 263.8 898.6 265.4 898 266.7C897.4 268 898.7 271 898 272.2C897.3 273.4 894 274.7 893.1 276C892.2 277.3 892.3 280.6 891.1 281.9C889.9 283.2 885.8 285.4 884.2 286.1C882.6 286.8 880.4 287.2 879.1 287C877.8 286.8 875.6 284.3 874.4 284.7C873.2 285.1 871.7 289.7 870.3 290.3C868.9 290.9 865.7 289.3 864 289.3C862.4 289.3 859.2 289.6 857.8 290.3C856.4 291 854.3 293.3 853.6 294.4C852.9 295.5 853.2 297.8 852.2 298.6C851.2 299.4 847.6 300.3 846 300.3C844.3 300.3 841.1 299 839.7 298.6C838.3 298.2 837.1 296.7 835.6 297.2C834.1 297.7 830 301.9 828.6 302C827.2 302.1 826.3 298.7 825.2 297.9C824.1 297 821 295.4 820.3 295.8C819.6 296.2 820.2 299.6 819.6 300.7C819 301.8 817.2 303.8 816.1 304.2C815 304.6 812.3 303.4 811.1 303.5C809.8 303.7 807.7 305.9 806.4 305.6C805.1 305.3 802.4 302.8 801.3 301.5C800.1 300.2 799.1 296.7 798 295.8C796.9 294.9 794.4 294.9 793.1 295C791.8 295.1 789.3 295.3 788.3 296.5C787.3 297.7 786.5 303.9 785.6 304.2C784.7 304.5 782.8 299.6 781.7 298.6C780.6 297.6 778.4 297.5 777.4 296.8C776.5 296 775.7 293.8 774.7 293C773.7 292.2 771.4 291.2 770.1 290.9C768.8 290.6 766.4 291.1 765 291C763.6 290.9 761.2 290.8 759.9 290.5C758.6 290.1 756.5 288.8 755.3 288.2C754.1 287.6 752.3 286.9 751.1 286.1C749.9 285.3 747.6 283 746.1 282.5C744.6 281.9 740.8 282.9 740 281.9C739.2 280.9 740.9 276.5 740 275C739.1 273.5 734.1 272.1 733 270.8C731.9 269.5 732.7 266.3 731.7 265.3C730.7 264.3 727.2 264 725.9 263.1C724.6 262.2 722 259.7 721.9 258.3C721.8 256.9 724.7 254.1 725.1 252.4C725.4 250.8 725.5 247 724.7 245.8C723.9 244.6 720.6 244.5 719.4 243.6C718.3 242.7 715.9 240 716 239z" fill="none" stroke="#000" stroke-linecap="round" stroke-linejoin="round" stroke-width="1.35"/>
<path d="M441.5 151.5H1106.5V523.5H445.5V148.5" fill="none" stroke="#000" stroke-width="1"/>
<path d="M621.5 166.5H1016.5V490.5H621.5z" fill="none" stroke="#828282" stroke-width="1.4" stroke-dasharray="4 4"/>
<path d="M654.5 250.5H1001.5V490.5H654.5z" fill="none" stroke="#828282" stroke-width="1.4" stroke-dasharray="4 4"/>
<path d="M782.5 490.7L796.4 474.5L801.4 435.7L801.1 370.6L758.6 327.6L706 336.6L686.1 358.2L678.3 350.8L696.5 330.6L671.4 318.6L678.1 308.2L704.9 322.8L732.5 317.4L708.2 299.4L686.8 283.6L658.1 278.5L660.3 266.7L690.4 271.8L693.5 250.4L705.6 251.4L701.4 276.4L716 289.3L743.1 308.8L757.4 309.6L760.3 281.8L772.9 281.8L771.8 311.4L821.4 355.4L856.1 313.4L856.5 284L866.4 280.6L868.9 303.5L893.7 289.3L904.8 262.5L917 263.9L910.6 285L942.2 293.8L961 273.6L974.4 276.7L953.3 299.4L967.2 311.4L999.9 321.8L997.1 333.5L963.2 325L958.2 351.3L945.3 346.9L950.8 316.7L931 304.2L903.8 303.5L873.1 322.1L839 371L836.5 427.3L840.6 473.3L849.8 491" fill="none" stroke="#3a3a3a" stroke-width="1.7" stroke-linejoin="round"/>
<path d="M782.5 490.7L796.4 474.5L801.4 435.7L801.1 370.6L758.6 327.6L706 336.6L686.1 358.2L678.3 350.8L696.5 330.6L671.4 318.6L678.1 308.2L704.9 322.8L732.5 317.4L708.2 299.4L686.8 283.6L658.1 278.5L660.3 266.7L690.4 271.8L693.5 250.4L705.6 251.4L701.4 276.4L716 289.3L743.1 308.8L757.4 309.6L760.3 281.8L772.9 281.8L771.8 311.4L821.4 355.4L856.1 313.4L856.5 284L866.4 280.6L868.9 303.5L893.7 289.3L904.8 262.5L917 263.9L910.6 285L942.2 293.8L961 273.6L974.4 276.7L953.3 299.4L967.2 311.4L999.9 321.8L997.1 333.5L963.2 325L958.2 351.3L945.3 346.9L950.8 316.7L931 304.2L903.8 303.5L873.1 322.1L839 371L836.5 427.3L840.6 473.3L849.8 491" fill="none" stroke="#c4c4c4" stroke-width="0.55" stroke-linejoin="round"/>
<g fill="#aaeeff" stroke="#1e1e1e" stroke-width="1"><circle cx="693.5" cy="250.4" r="5"/><circle cx="705.6" cy="251.4" r="5"/><circle cx="660.3" cy="266.7" r="5"/><circle cx="658.1" cy="278.5" r="5"/><circle cx="690.4" cy="271.8" r="5"/><circle cx="701.4" cy="276.4" r="5"/><circle cx="686.8" cy="283.6" r="5"/><circle cx="716" cy="289.3" r="5"/><circle cx="708.2" cy="299.4" r="5"/><circle cx="743.1" cy="308.8" r="5"/><circle cx="757.4" cy="309.6" r="5"/><circle cx="760.3" cy="281.8" r="5"/><circle cx="772.9" cy="281.8" r="5"/><circle cx="771.8" cy="311.4" r="5"/><circle cx="732.5" cy="317.4" r="5"/><circle cx="678.1" cy="308.2" r="5"/><circle cx="671.4" cy="318.6" r="5"/><circle cx="704.9" cy="322.8" r="5"/><circle cx="696.5" cy="330.6" r="5"/><circle cx="706" cy="336.6" r="5"/><circle cx="678.3" cy="350.8" r="5"/><circle cx="686.1" cy="358.2" r="5"/><circle cx="758.6" cy="327.6" r="5"/><circle cx="821.4" cy="355.4" r="5"/><circle cx="801.1" cy="370.6" r="5"/><circle cx="839" cy="371" r="5"/><circle cx="856.5" cy="284" r="5"/><circle cx="866.4" cy="280.6" r="5"/><circle cx="868.9" cy="303.5" r="5"/><circle cx="856.1" cy="313.4" r="5"/><circle cx="873.1" cy="322.1" r="5"/><circle cx="893.7" cy="289.3" r="5"/><circle cx="904.8" cy="262.5" r="5"/><circle cx="917" cy="263.9" r="5"/><circle cx="910.6" cy="285" r="5"/><circle cx="903.8" cy="303.5" r="5"/><circle cx="931" cy="304.2" r="5"/><circle cx="942.2" cy="293.8" r="5"/><circle cx="961" cy="273.6" r="5"/><circle cx="974.4" cy="276.7" r="5"/><circle cx="953.3" cy="299.4" r="5"/><circle cx="967.2" cy="311.4" r="5"/><circle cx="950.8" cy="316.7" r="5"/><circle cx="963.2" cy="325" r="5"/><circle cx="999.9" cy="321.8" r="5"/><circle cx="997.1" cy="333.5" r="5"/><circle cx="945.3" cy="346.9" r="5"/><circle cx="958.2" cy="351.3" r="5"/><circle cx="801.4" cy="435.7" r="5"/><circle cx="836.5" cy="427.3" r="5"/><circle cx="796.4" cy="474.5" r="5"/><circle cx="840.6" cy="473.3" r="5"/><circle cx="782.5" cy="490.7" r="5"/><circle cx="849.8" cy="491" r="5"/></g>
</svg>
</div></div>
<div class="hdr" style="left:1308px;top:73px;width:228px;height:14px"><div class="t" style="left:0;right:0;top:1.5px">Fill and Stroke</div></div>
<div class="a" style="left:1308px;top:87px;width:228px;height:472px;background:#3b3b3b;border:1px solid #606060;border-right:0"></div>
<svg class="a" style="left:1521.5px;top:97.5px" width="5.5" height="4.5" viewBox="0 0 5.5 4.5"><path d="M0 4.5h5.5L2.75 0z" fill="#fff"/></svg>
<svg class="a" style="left:1521.5px;top:543.5px" width="6" height="5" viewBox="0 0 6 5"><path d="M0 0h6L3.0 5z" fill="#fff"/></svg>
<div class="a" style="left:1320px;top:99px;width:192px;height:19px;border:1px solid #1e1e1e;border-radius:5px;background:linear-gradient(#3a3a3a,#2c2c2c);overflow:hidden"><div class="a" style="left:0;top:0;width:96px;height:17px;background:linear-gradient(#4aa3dc,#3a8fcb)"></div><div class="a" style="left:36px;top:4px;width:8px;height:8px;background:#fff;border:1px solid #333"></div><div class="t" style="left:46px;top:3px;color:#fff">Fill</div><div class="a" style="left:122px;top:5px;width:7px;height:6px;border:1px solid #fff;background:#222"></div><div class="t" style="left:132px;top:3px">Stroke</div></div>
<div class="a" style="left:1320px;top:122px;width:192px;height:19px;border:1px solid #1e1e1e;border-radius:5px;background:linear-gradient(#3a3a3a,#2c2c2c);overflow:hidden"><div class="a" style="left:64px;top:0;width:64px;height:17px;background:linear-gradient(#4aa3dc,#3a8fcb)"></div><svg class="a" style="left:12px;top:4px" width="9" height="9" viewBox="0 0 9 9"><path d="M1 1l7 7M8 1l-7 7" stroke="#ddd" stroke-width="1"/></svg><div class="t" style="left:24px;top:3px">None</div><div class="a" style="left:80px;top:4px;width:8px;height:8px;background:#fff;border:1px solid #333"></div><div class="t" style="left:92px;top:3px;color:#fff">Flat</div><div class="a" style="left:132px;top:4px;width:8px;height:8px;background:linear-gradient(90deg,#fff,#777);border:1px solid #333"></div><div class="t" style="left:143px;top:3px">Gradient</div></div>
<div class="a" style="left:1327px;top:153.5px;width:156px;height:16.5px;background:#bd7e46"></div>
<div class="btn" style="left:1487px;top:153px"><svg style="left:-1px;top:-1px;width:18px;height:18px" viewBox="0 0 18 18"><path d="M3 15.3L3.6 13.2 9.6 7.2 11 8.6 5 14.6z" fill="#fff" stroke="#1a1a1a" stroke-width="0.8" stroke-linejoin="round"/><path d="M8.8 6l3.4 3.4" stroke="#1a1a1a" stroke-width="2" stroke-linecap="round"/><ellipse cx="12.6" cy="5.3" rx="3.3" ry="2.3" transform="rotate(-45 12.6 5.3)" fill="#fff" stroke="#1a1a1a" stroke-width="0.8"/></svg></div>
<div class="a" style="left:1327px;top:175px;width:50px;height:22px;border:1px solid #1c1c1c;border-bottom:0;border-radius:3px 3px 0 0;background:#8a8a8a"><div class="t dk" style="left:0;right:0;top:5px;text-align:center">RGB</div></div>
<div class="a" style="left:1376.5px;top:176px;width:50px;height:20px;border:1px solid #1c1c1c;border-bottom:0;border-radius:3px 3px 0 0;background:#555"><div class="t" style="left:0;right:0;top:4px;text-align:center">HSV</div></div>
<div class="a" style="left:1426px;top:176px;width:50px;height:20px;border:1px solid #1c1c1c;border-bottom:0;border-radius:3px 3px 0 0;background:#555"><div class="t" style="left:0;right:0;top:4px;text-align:center">HSL</div></div>
<div class="a" style="left:1327px;top:196px;width:178px;height:96px;border:1px solid #666;background:#3b3b3b"></div>
<div class="t" style="left:1339px;top:210px">R:</div>
<div class="a" style="left:1360px;top:208px;width:93px;height:16px;background:linear-gradient(90deg,#007e46,#ff7e46)"></div>
<div class="a" style="left:1427.1px;top:208px;width:3.0px;height:16px;background:#000"></div>
<div class="vb" style="left:1459px;top:209px;width:32.6px;height:14px"><i style="width:22.7px"></i><div class="t" style="top:2.4px">0,741</div></div>
<div class="t" style="left:1339px;top:229px">G:</div>
<div class="a" style="left:1360px;top:227px;width:93px;height:16px;background:linear-gradient(90deg,#bd0046,#bdff46)"></div>
<div class="a" style="left:1404.1px;top:227px;width:3.0px;height:16px;background:#000"></div>
<div class="vb" style="left:1459px;top:228px;width:32.6px;height:14px"><i style="width:15.1px"></i><div class="t" style="top:2.4px">0,494</div></div>
<div class="t" style="left:1339px;top:248px">B:</div>
<div class="a" style="left:1360px;top:246px;width:93px;height:16px;background:linear-gradient(90deg,#bd7e00,#bd7eff)"></div>
<div class="a" style="left:1383.8px;top:246px;width:3.0px;height:16px;background:#000"></div>
<div class="vb" style="left:1459px;top:247px;width:32.6px;height:14px"><i style="width:8.4px"></i><div class="t" style="top:2.4px">0,275</div></div>
<div class="t" style="left:1339px;top:267px">A:</div>
<div class="a" style="left:1360px;top:265px;width:93px;height:16px;background:linear-gradient(90deg,rgba(189,126,70,0),rgba(189,126,70,1)),repeating-conic-gradient(#666 0 25%,#444 0 50%) 0 0/10px 10px"></div>
<div class="a" style="left:1451.0px;top:265px;width:2.0px;height:16px;background:#000"></div>
<div class="vb" style="left:1459px;top:266px;width:32.6px;height:14px"><i style="right:1px;border-radius:2.5px"></i><div class="t" style="top:2.4px">1,000</div></div>
<div class="t" style="left:1327px;top:298px">Color model:</div>
<div class="cb" style="left:1419px;top:297px;width:86px;height:15px"><div class="t" style="left:4px;top:0.5px">RGB</div><div class="ar" style="width:12px"></div></div>
<div class="tb" style="left:1px;top:565px;width:1534px;height:29px"></div>
<div class="sep" style="left:4px;top:567px;height:26px"></div>
<div class="sep" style="left:144px;top:567px;height:26px"></div>
<div class="sep" style="left:196px;top:567px;height:26px"></div>
<div class="sep" style="left:227px;top:567px;height:26px"></div>
<div class="sep" style="left:1407px;top:567px;height:26px"></div>
<div class="sep" style="left:1531px;top:567px;height:26px"></div>
<div class="t dk" style="left:19px;top:575px">Resolution:</div>
<div class="cb" style="left:84px;top:572px;width:54px;height:15px"><div class="t" style="left:4px;top:0.5px">100 %</div><div class="ar" style="width:13px"></div></div>
<div class="btn" style="left:151px;top:570px"><svg style="left:-1px;top:-1px;width:18px;height:18px" viewBox="0 0 18 18"><path d="M4.8 5l7.4 4-7.4 4z" fill="none" stroke="#fff" stroke-width="1.3" stroke-linejoin="round"/><path d="M4.8 5l7.4 4-7.4 4z" fill="none" stroke="#1a1a1a" stroke-width="2.3" stroke-linejoin="round" opacity="0.35"/><path d="M4.8 5l7.4 4-7.4 4z" fill="#999" stroke="#fff" stroke-width="1.2" stroke-linejoin="round"/></svg></div>
<div class="btn" style="left:172px;top:570px"><svg style="left:-1px;top:-1px;width:18px;height:18px" viewBox="0 0 18 18"><rect x="5" y="5.4" width="7.4" height="7.4" fill="#fff" stroke="#1a1a1a" stroke-width="0.8"/></svg></div>
<div class="btn" style="left:203px;top:570px"><svg style="left:-1px;top:-1px;width:18px;height:18px" viewBox="0 0 18 18"><circle cx="5.9" cy="6.2" r="3.3" fill="#fff" stroke="#1a1a1a" stroke-width="0.8"/><circle cx="12.1" cy="12.5" r="3.3" fill="#fff" stroke="#1a1a1a" stroke-width="0.8"/><circle cx="5.9" cy="6.2" r="1.35" fill="#3fae3f" stroke="#444" stroke-width="0.5"/><circle cx="12.1" cy="12.5" r="1.35" fill="#3fae3f" stroke="#444" stroke-width="0.5"/></svg></div>
<div class="a" style="left:1414px;top:572px;width:57px;height:22px;background:#3b3b3b;border-radius:4px 4px 0 0"><div class="t" style="left:8px;top:3px;color:#fff">Timeline</div></div>
<div class="t dk" style="left:1482px;top:575px">Render</div>
<div class="hdr" style="left:1px;top:595px;width:320px;height:14px;text-align:left"><div class="t" style="left:8px;top:2px">Scene 0</div><div class="a" style="left:126px;top:0;width:99px;height:14px;background:#fff;border-left:1px solid #555;border-right:1px solid #777"></div><svg class="a" style="left:230px;top:2px" width="86" height="10" viewBox="0 0 86 10"><g fill="#1a1a1a"><circle cx="3.6" cy="5.6" r="1.05"/><circle cx="7.1" cy="5.6" r="1.05"/><circle cx="10.6" cy="5.6" r="1.05"/></g><g fill="none" stroke="#1a1a1a" stroke-width="1.1"><rect x="21.5" y="1.5" width="7" height="8" rx="0.5"/><path d="M21.5 6.5h3.5v-2h3.5"/><rect x="42.5" y="1.5" width="7" height="8" rx="0.5"/><path d="M42.5 5.5h7"/><rect x="59.5" y="1.5" width="8" height="8" rx="0.5"/><path d="M63.5 1.5v8"/><path d="M78.7 3.7l4.2 4.2M82.9 3.7l-4.2 4.2" stroke-width="1.3"/></g></svg></div>
<div class="a" style="left:1px;top:609px;width:320px;height:237px;background:#3b3b3b"></div>
<div class="a" style="left:322px;top:595px;width:1214px;height:251px;background:#3b3b3b"></div>
<div class="a" style="left:322px;top:595px;width:7px;height:14px;background:#2a2a2a"></div>
<div class="a" style="left:917px;top:595px;width:594px;height:12px;background:#772a2a"></div>
<div class="a" style="left:1511px;top:595px;width:18px;height:12px;background:#611919"></div>
<div class="a" style="left:1529px;top:595px;width:7px;height:14px;background:#2a2a2a"></div>
<div class="a" style="left:923px;top:595px;width:6px;height:12px;background:rgba(255,255,255,0.2)"></div>
<div class="a" style="left:322px;top:607px;width:1214px;height:3px;background:linear-gradient(#2e2e2e,#1e1e1e)"></div>
<div class="a" style="left:322px;top:594px;width:1214px;height:1px;background:#2a2a2a"></div>
<div class="t" style="left:605.7px;width:40px;text-align:center;top:596.5px">50</div>
<div class="a" style="left:625.2px;top:606.5px;width:1px;height:2.5px;background:#ddd"></div>
<div class="t" style="left:899.9px;width:40px;text-align:center;top:596.5px">100</div>
<div class="a" style="left:919.4px;top:606.5px;width:1px;height:2.5px;background:#ddd"></div>
<div class="t" style="left:1194.1px;width:40px;text-align:center;top:596.5px">150</div>
<div class="a" style="left:1213.6px;top:606.5px;width:1px;height:2.5px;background:#ddd"></div>
<div class="t" style="left:1488.3px;width:40px;text-align:center;top:596.5px">200</div>
<div class="a" style="left:1507.8px;top:606.5px;width:1px;height:2.5px;background:#ddd"></div>
<div class="t" style="left:337px;top:596.5px">101</div>
<svg class="a" style="left:322px;top:610px" width="1202" height="226" viewBox="322 610 1202 226">
<path d="M322 627h1202M322 643h1202M322 659h1202M322 675h1202M322 691h1202M322 707h1202M322 723h1202M322 739h1202M322 755h1202M322 771h1202M322 787h1202M322 803h1202M322 819h1202M322 835h1202" stroke="#333" stroke-width="2" fill="none"/>
<path d="M331.50 610v226M360.92 610v226M390.34 610v226M419.76 610v226M449.18 610v226M478.60 610v226M508.02 610v226M537.44 610v226M566.86 610v226M596.28 610v226M625.70 610v226M655.12 610v226M684.54 610v226M713.96 610v226M743.38 610v226M772.80 610v226M802.22 610v226M831.64 610v226M861.06 610v226M890.48 610v226M919.90 610v226M949.32 610v226M978.74 610v226M1008.16 610v226M1037.58 610v226M1067.00 610v226M1096.42 610v226M1125.84 610v226M1155.26 610v226M1184.68 610v226M1214.10 610v226M1243.52 610v226M1272.94 610v226M1302.36 610v226M1331.78 610v226M1361.20 610v226M1390.62 610v226M1420.04 610v226M1449.46 610v226M1478.88 610v226M1508.30 610v226" stroke="#4b4b4b" stroke-width="1" fill="none"/>
<rect x="357.4" y="739" width="1170" height="14" fill="#36369a"/>
<path d="M360.92 739v14M390.34 739v14M419.76 739v14M449.18 739v14M478.60 739v14M508.02 739v14M537.44 739v14M566.86 739v14M596.28 739v14M625.70 739v14M655.12 739v14M684.54 739v14M713.96 739v14M743.38 739v14M772.80 739v14M802.22 739v14M831.64 739v14M861.06 739v14M890.48 739v14M919.90 739v14M949.32 739v14M978.74 739v14M1008.16 739v14M1037.58 739v14M1067.00 739v14M1096.42 739v14M1125.84 739v14M1155.26 739v14M1184.68 739v14M1214.10 739v14M1243.52 739v14M1272.94 739v14M1302.36 739v14M1331.78 739v14M1361.20 739v14M1390.62 739v14M1420.04 739v14M1449.46 739v14M1478.88 739v14M1508.30 739v14" stroke="#4444a4" stroke-width="1" fill="none"/>
<rect x="356.4" y="737" width="1.5" height="16" fill="#1a1a1a"/>
<rect x="924.8" y="610" width="1.5" height="226" fill="#acacac"/>
<circle cx="331.5" cy="617.5" r="3.3" fill="#f00" stroke="#4a0a0a" stroke-width="0.7"/>
<circle cx="919.9" cy="617.5" r="3.3" fill="#f00" stroke="#4a0a0a" stroke-width="0.7"/>
<circle cx="331.5" cy="665.5" r="3.3" fill="#f00" stroke="#4a0a0a" stroke-width="0.7"/>
<circle cx="919.9" cy="665.5" r="3.3" fill="#f00" stroke="#4a0a0a" stroke-width="0.7"/>
<circle cx="360.9" cy="745.5" r="3.3" fill="#f00" stroke="#4a0a0a" stroke-width="0.7"/>
<circle cx="390.3" cy="745.5" r="3.3" fill="#f00" stroke="#4a0a0a" stroke-width="0.7"/>
<circle cx="419.8" cy="745.5" r="3.3" fill="#f00" stroke="#4a0a0a" stroke-width="0.7"/>
<circle cx="449.2" cy="745.5" r="3.3" fill="#f00" stroke="#4a0a0a" stroke-width="0.7"/>
<circle cx="478.6" cy="745.5" r="3.3" fill="#f00" stroke="#4a0a0a" stroke-width="0.7"/>
<circle cx="508.0" cy="745.5" r="3.3" fill="#f00" stroke="#4a0a0a" stroke-width="0.7"/>
<circle cx="537.4" cy="745.5" r="3.3" fill="#f00" stroke="#4a0a0a" stroke-width="0.7"/>
<circle cx="566.9" cy="745.5" r="3.3" fill="#f00" stroke="#4a0a0a" stroke-width="0.7"/>
<circle cx="596.3" cy="745.5" r="3.3" fill="#f00" stroke="#4a0a0a" stroke-width="0.7"/>
<circle cx="625.7" cy="745.5" r="3.3" fill="#f00" stroke="#4a0a0a" stroke-width="0.7"/>
<circle cx="360.9" cy="809.5" r="3.3" fill="#f00" stroke="#4a0a0a" stroke-width="0.7"/>
<circle cx="390.3" cy="809.5" r="3.3" fill="#f00" stroke="#4a0a0a" stroke-width="0.7"/>
<circle cx="419.8" cy="809.5" r="3.3" fill="#f00" stroke="#4a0a0a" stroke-width="0.7"/>
<circle cx="449.2" cy="809.5" r="3.3" fill="#f00" stroke="#4a0a0a" stroke-width="0.7"/>
<circle cx="478.6" cy="809.5" r="3.3" fill="#f00" stroke="#4a0a0a" stroke-width="0.7"/>
<circle cx="508.0" cy="809.5" r="3.3" fill="#f00" stroke="#4a0a0a" stroke-width="0.7"/>
<circle cx="537.4" cy="809.5" r="3.3" fill="#f00" stroke="#4a0a0a" stroke-width="0.7"/>
<circle cx="566.9" cy="809.5" r="3.3" fill="#f00" stroke="#4a0a0a" stroke-width="0.7"/>
<circle cx="596.3" cy="809.5" r="3.3" fill="#f00" stroke="#4a0a0a" stroke-width="0.7"/>
<circle cx="625.7" cy="809.5" r="3.3" fill="#f00" stroke="#4a0a0a" stroke-width="0.7"/>
</svg>
<div class="a" style="left:321px;top:595px;width:1px;height:251px;background:#141414"></div>
<div class="a" style="left:1524px;top:610px;width:12px;height:226px;background:#3b3b3b"></div>
<div class="a" style="left:1524px;top:626px;width:12px;height:139px;background:#666"></div>
<svg class="a" style="left:1526.5px;top:615px" width="6" height="5" viewBox="0 0 6 5"><path d="M0 5h6L3.0 0z" fill="#fff"/></svg>
<svg class="a" style="left:1526.5px;top:825px" width="6" height="5" viewBox="0 0 6 5"><path d="M0 0h6L3.0 5z" fill="#fff"/></svg>
<div class="a" style="left:322px;top:835px;width:1214px;height:11px;background:#1e1e1e"></div>
<div class="a" style="left:329px;top:836px;width:1182px;height:10px;background:#686868"></div>
<div class="a" style="left:322px;top:836px;width:7px;height:10px;background:#2c2c2c"></div>
<div class="t" style="left:604.7px;width:40px;text-align:center;top:835px">50</div>
<div class="t" style="left:900.5px;width:40px;text-align:center;top:835px">100</div>
<div class="t" style="left:1196.0px;width:40px;text-align:center;top:835px">150</div>
<div class="t" style="left:1491.4px;width:40px;text-align:center;top:835px">200</div>
<div class="t" style="left:325.7px;top:835px">0</div>
<div class="a" style="left:0px;top:847px;width:1536px;height:17px;background:#3b3b3b"></div>
<div class="t" style="left:1068px;top:849px">gpu:</div>
<div class="a" style="left:1098px;top:851px;width:77px;height:8px;background:#2a2a2a"></div>
<div class="t" style="left:1185px;top:849px">cpu:</div>
<div class="a" style="left:1214px;top:851px;width:77px;height:8px;background:#2a2a2a"></div>
<div class="t" style="left:1301px;top:849px">hdd:</div>
<div class="a" style="left:1331px;top:851px;width:77px;height:8px;background:#2a2a2a"></div>
<div class="t" style="left:1418px;top:849px">ram:</div>
<div class="a" style="left:1448px;top:851px;width:77px;height:8px;background:#2a2a2a"></div>
<div class="a" style="left:1449.5px;top:852px;width:4.3px;height:6px;background:#fff"></div>
<div class="a" style="left:1455.2px;top:852px;width:4.3px;height:6px;background:#fff"></div>
<div class="a" style="left:1460.9px;top:852px;width:4.3px;height:6px;background:#fff"></div>
<div class="a" style="left:1466.6px;top:852px;width:4.3px;height:6px;background:#fff"></div>
<div class="a" style="left:0;top:609px;width:321px;height:237px;overflow:hidden"><div class="a" style="left:0;top:-609px;width:321px;height:864px">
<div class="a" style="left:1px;top:626px;width:320px;height:2px;background:#343434"></div>
<div class="a" style="left:1px;top:642px;width:320px;height:2px;background:#343434"></div>
<div class="a" style="left:1px;top:658px;width:320px;height:2px;background:#343434"></div>
<div class="a" style="left:1px;top:674px;width:320px;height:2px;background:#343434"></div>
<div class="a" style="left:1px;top:690px;width:320px;height:2px;background:#343434"></div>
<div class="a" style="left:1px;top:706px;width:320px;height:2px;background:#343434"></div>
<div class="a" style="left:1px;top:722px;width:320px;height:2px;background:#343434"></div>
<div class="a" style="left:1px;top:738px;width:320px;height:2px;background:#343434"></div>
<div class="a" style="left:1px;top:754px;width:320px;height:2px;background:#343434"></div>
<div class="a" style="left:1px;top:770px;width:320px;height:2px;background:#343434"></div>
<div class="a" style="left:1px;top:786px;width:320px;height:2px;background:#343434"></div>
<div class="a" style="left:1px;top:802px;width:320px;height:2px;background:#343434"></div>
<div class="a" style="left:1px;top:818px;width:320px;height:2px;background:#343434"></div>
<div class="a" style="left:1px;top:834px;width:320px;height:2px;background:#343434"></div>
<div class="a" style="left:1px;top:850px;width:320px;height:2px;background:#343434"></div>
<div class="a" style="left:1px;top:610px;width:320px;height:17px;background:#2d2d2d"></div><svg class="a" style="left:5px;top:615.5px" width="6" height="5" viewBox="0 0 6 5"><path d="M0 0h6L3.0 5z" fill="#fff"/></svg><svg class="a" style="left:16px;top:612.6px" width="16" height="9.6" viewBox="0 0 16 11" preserveAspectRatio="none"><path d="M0.9 5.4C3 2.4 5.4 1.3 7.6 1.3S12.2 2.5 14 4.8C12.4 8 10 9.5 7.6 9.5S2.8 8.2 0.9 5.4z" fill="none" stroke="#f2f2f2" stroke-width="1"/><path d="M12.6 3.2l1.6-.5M13.4 4.6l1.9.1" stroke="#f2f2f2" stroke-width="0.7" fill="none"/><circle cx="7.4" cy="5" r="2.7" fill="none" stroke="#f2f2f2" stroke-width="0.9"/><circle cx="7.4" cy="5" r="1" fill="#f2f2f2"/></svg><svg class="a" style="left:35.5px;top:611.2px" width="10.6" height="12.4" viewBox="0 0 12 13" preserveAspectRatio="none"><path d="M9.3 5V3.6C9.3 1.9 8 1 6.6 1 5.4 1 4.4 1.5 3.8 2.3" fill="none" stroke="#f2f2f2" stroke-width="1.2" stroke-linecap="round"/><path d="M1.3 5.7l8.8-.5.7 5.9-8.8.8z" fill="none" stroke="#f2f2f2" stroke-width="1.3" stroke-linejoin="round"/><path d="M4.1 7.3v2.6M6.8 7.1v2.6" stroke="#f2f2f2" stroke-width="1.1"/></svg><div class="t" style="left:53px;top:613px">Group</div><div class="cb dis" style="left:234px;top:609px;width:79px;height:17px"><div class="t" style="left:4px;top:2px">SrcOver</div><div class="ar" style="width:13px"></div></div>
<div class="a" style="left:20px;top:629.2px;width:8px;height:8px;border-radius:4px;background:#1e1e1e"></div><div class="a" style="left:21px;top:630.2px;width:6px;height:6px;border-radius:3px;background:#fff"></div><svg class="a" style="left:37.7px;top:631.2px" width="4" height="4.6" viewBox="0 0 4 4.6"><path d="M0 0v4.6L4 2.3z" fill="#fff"/></svg><div class="t" style="left:49px;top:629px;color:#e6e6e6">transformation</div>
<div class="a" style="left:20px;top:645.2px;width:8px;height:8px;border-radius:4px;background:#1e1e1e"></div><div class="a" style="left:21px;top:646.2px;width:6px;height:6px;border-radius:3px;background:#fff"></div><svg class="a" style="left:37.7px;top:647.2px" width="4" height="4.6" viewBox="0 0 4 4.6"><path d="M0 0v4.6L4 2.3z" fill="#fff"/></svg><div class="t" style="left:49px;top:645px;color:#e6e6e6">fill effects</div>
<div class="a" style="left:20px;top:661.2px;width:8px;height:8px;border-radius:4px;background:#1e1e1e"></div><div class="a" style="left:21px;top:662.2px;width:6px;height:6px;border-radius:3px;background:#fff"></div><div class="a" style="left:22.5px;top:663.7px;width:3px;height:3px;border-radius:2px;background:#f00"></div><svg class="a" style="left:37.7px;top:663.2px" width="4" height="4.6" viewBox="0 0 4 4.6"><path d="M0 0v4.6L4 2.3z" fill="#fff"/></svg><div class="t" style="left:49px;top:661px;color:#e6e6e6">outline base effects</div>
<div class="a" style="left:20px;top:677.2px;width:8px;height:8px;border-radius:4px;background:#1e1e1e"></div><div class="a" style="left:21px;top:678.2px;width:6px;height:6px;border-radius:3px;background:#fff"></div><svg class="a" style="left:37.7px;top:679.2px" width="4" height="4.6" viewBox="0 0 4 4.6"><path d="M0 0v4.6L4 2.3z" fill="#fff"/></svg><div class="t" style="left:49px;top:677px;color:#e6e6e6">outline effects</div>
<div class="a" style="left:17px;top:690px;width:304px;height:17px;background:#2d2d2d"></div><svg class="a" style="left:21px;top:695.5px" width="6" height="5" viewBox="0 0 6 5"><path d="M0 0h6L3.0 5z" fill="#fff"/></svg><svg class="a" style="left:32px;top:692.6px" width="16" height="9.6" viewBox="0 0 16 11" preserveAspectRatio="none"><path d="M0.9 5.4C3 2.4 5.4 1.3 7.6 1.3S12.2 2.5 14 4.8C12.4 8 10 9.5 7.6 9.5S2.8 8.2 0.9 5.4z" fill="none" stroke="#f2f2f2" stroke-width="1"/><path d="M12.6 3.2l1.6-.5M13.4 4.6l1.9.1" stroke="#f2f2f2" stroke-width="0.7" fill="none"/><circle cx="7.4" cy="5" r="2.7" fill="none" stroke="#f2f2f2" stroke-width="0.9"/><circle cx="7.4" cy="5" r="1" fill="#f2f2f2"/></svg><svg class="a" style="left:51.5px;top:691.2px" width="10.6" height="12.4" viewBox="0 0 12 13" preserveAspectRatio="none"><path d="M9.3 5V3.6C9.3 1.9 8 1 6.6 1 5.4 1 4.4 1.5 3.8 2.3" fill="none" stroke="#f2f2f2" stroke-width="1.2" stroke-linecap="round"/><path d="M1.3 5.7l8.8-.5.7 5.9-8.8.8z" fill="none" stroke="#f2f2f2" stroke-width="1.3" stroke-linejoin="round"/><path d="M4.1 7.3v2.6M6.8 7.1v2.6" stroke="#f2f2f2" stroke-width="1.1"/></svg><div class="t" style="left:69px;top:693px">Layer</div><div class="cb" style="left:234px;top:689px;width:79px;height:17px"><div class="t" style="left:4px;top:2px">SrcOver</div><div class="ar" style="width:13px"></div></div>
<div class="a" style="left:36px;top:709.2px;width:8px;height:8px;border-radius:4px;background:#1e1e1e"></div><div class="a" style="left:37px;top:710.2px;width:6px;height:6px;border-radius:3px;background:#fff"></div><svg class="a" style="left:53.7px;top:711.2px" width="4" height="4.6" viewBox="0 0 4 4.6"><path d="M0 0v4.6L4 2.3z" fill="#fff"/></svg><div class="t" style="left:65px;top:709px;color:#e6e6e6">transformation</div>
<div class="a" style="left:33px;top:722px;width:288px;height:17px;background:#2d2d2d"></div><svg class="a" style="left:37.5px;top:726.7px" width="5.2" height="5.8" viewBox="0 0 5.2 5.8"><path d="M0 0v5.8L5.2 2.9z" fill="#fff"/></svg><svg class="a" style="left:48px;top:724.6px" width="16" height="9.6" viewBox="0 0 16 11" preserveAspectRatio="none"><path d="M0.9 5.4C3 2.4 5.4 1.3 7.6 1.3S12.2 2.5 14 4.8C12.4 8 10 9.5 7.6 9.5S2.8 8.2 0.9 5.4z" fill="none" stroke="#f2f2f2" stroke-width="1"/><path d="M12.6 3.2l1.6-.5M13.4 4.6l1.9.1" stroke="#f2f2f2" stroke-width="0.7" fill="none"/><circle cx="7.4" cy="5" r="2.7" fill="none" stroke="#f2f2f2" stroke-width="0.9"/><circle cx="7.4" cy="5" r="1" fill="#f2f2f2"/></svg><svg class="a" style="left:67.5px;top:723.2px" width="10.6" height="12.4" viewBox="0 0 12 13" preserveAspectRatio="none"><path d="M9.3 5V3.6C9.3 1.9 8 1 6.6 1 5.4 1 4.4 1.5 3.8 2.3" fill="none" stroke="#f2f2f2" stroke-width="1.2" stroke-linecap="round"/><path d="M1.3 5.7l8.8-.5.7 5.9-8.8.8z" fill="none" stroke="#f2f2f2" stroke-width="1.3" stroke-linejoin="round"/><path d="M4.1 7.3v2.6M6.8 7.1v2.6" stroke="#f2f2f2" stroke-width="1.1"/></svg><div class="t" style="left:85px;top:725px">Group</div><div class="cb dis" style="left:234px;top:721px;width:79px;height:17px"><div class="t" style="left:4px;top:2px">SrcOver</div><div class="ar" style="width:13px"></div></div>
<div class="a" style="left:33px;top:738px;width:288px;height:17px;background:#2d2d2d"></div><div class="a" style="left:81px;top:738px;width:154px;height:16px;background:#b4b4b4"></div><svg class="a" style="left:37px;top:743.5px" width="6" height="5" viewBox="0 0 6 5"><path d="M0 0h6L3.0 5z" fill="#fff"/></svg><svg class="a" style="left:48px;top:740.6px" width="16" height="9.6" viewBox="0 0 16 11" preserveAspectRatio="none"><path d="M0.9 5.4C3 2.4 5.4 1.3 7.6 1.3S12.2 2.5 14 4.8C12.4 8 10 9.5 7.6 9.5S2.8 8.2 0.9 5.4z" fill="none" stroke="#f2f2f2" stroke-width="1"/><path d="M12.6 3.2l1.6-.5M13.4 4.6l1.9.1" stroke="#f2f2f2" stroke-width="0.7" fill="none"/><circle cx="7.4" cy="5" r="2.7" fill="none" stroke="#f2f2f2" stroke-width="0.9"/><circle cx="7.4" cy="5" r="1" fill="#f2f2f2"/></svg><svg class="a" style="left:67.5px;top:739.2px" width="10.6" height="12.4" viewBox="0 0 12 13" preserveAspectRatio="none"><path d="M9.3 5V3.6C9.3 1.9 8 1 6.6 1 5.4 1 4.4 1.5 3.8 2.3" fill="none" stroke="#f2f2f2" stroke-width="1.2" stroke-linecap="round"/><path d="M1.3 5.7l8.8-.5.7 5.9-8.8.8z" fill="none" stroke="#f2f2f2" stroke-width="1.3" stroke-linejoin="round"/><path d="M4.1 7.3v2.6M6.8 7.1v2.6" stroke="#f2f2f2" stroke-width="1.1"/></svg><div class="t dk" style="left:85px;top:741px">Path</div><div class="cb" style="left:234px;top:737px;width:79px;height:17px"><div class="t" style="left:4px;top:2px">SrcOver</div><div class="ar" style="width:13px"></div></div>
<div class="a" style="left:52px;top:757.2px;width:8px;height:8px;border-radius:4px;background:#1e1e1e"></div><div class="a" style="left:53px;top:758.2px;width:6px;height:6px;border-radius:3px;background:#fff"></div><svg class="a" style="left:69.7px;top:759.2px" width="4" height="4.6" viewBox="0 0 4 4.6"><path d="M0 0v4.6L4 2.3z" fill="#fff"/></svg><div class="t" style="left:81px;top:757px;color:#e6e6e6">transformation</div>
<div class="a" style="left:52px;top:773.2px;width:8px;height:8px;border-radius:4px;background:#1e1e1e"></div><div class="a" style="left:53px;top:774.2px;width:6px;height:6px;border-radius:3px;background:#fff"></div><svg class="a" style="left:69.7px;top:775.2px" width="4" height="4.6" viewBox="0 0 4 4.6"><path d="M0 0v4.6L4 2.3z" fill="#fff"/></svg><div class="t" style="left:81px;top:773px;color:#e6e6e6">fill</div>
<div class="a" style="left:52px;top:789.2px;width:8px;height:8px;border-radius:4px;background:#1e1e1e"></div><div class="a" style="left:53px;top:790.2px;width:6px;height:6px;border-radius:3px;background:#fff"></div><svg class="a" style="left:69.7px;top:791.2px" width="4" height="4.6" viewBox="0 0 4 4.6"><path d="M0 0v4.6L4 2.3z" fill="#fff"/></svg><div class="t" style="left:81px;top:789px;color:#e6e6e6">outline</div>
<div class="a" style="left:52px;top:805.2px;width:8px;height:8px;border-radius:4px;background:#1e1e1e"></div><div class="a" style="left:53px;top:806.2px;width:6px;height:6px;border-radius:3px;background:#f00"></div><svg class="a" style="left:69.7px;top:807.2px" width="4" height="4.6" viewBox="0 0 4 4.6"><path d="M0 0v4.6L4 2.3z" fill="#fff"/></svg><div class="t" style="left:81px;top:805px;color:#e6e6e6">paths</div>
<div class="cb" style="left:246px;top:801px;width:67px;height:17px"><div class="t" style="left:3.5px;top:2px">Even-odd</div><div class="ar" style="width:13px"></div></div>
<div class="a" style="left:52px;top:821.2px;width:8px;height:8px;border-radius:4px;background:#1e1e1e"></div><div class="a" style="left:53px;top:822.2px;width:6px;height:6px;border-radius:3px;background:#fff"></div><svg class="a" style="left:69.7px;top:823.2px" width="4" height="4.6" viewBox="0 0 4 4.6"><path d="M0 0v4.6L4 2.3z" fill="#fff"/></svg><div class="t" style="left:81px;top:821px;color:#e6e6e6">path effects</div>
<div class="a" style="left:17px;top:834px;width:304px;height:17px;background:#2d2d2d"></div><svg class="a" style="left:21.5px;top:838.7px" width="5.2" height="5.8" viewBox="0 0 5.2 5.8"><path d="M0 0v5.8L5.2 2.9z" fill="#fff"/></svg><svg class="a" style="left:32px;top:836.6px" width="16" height="9.6" viewBox="0 0 16 11" preserveAspectRatio="none"><path d="M0.9 5.4C3 2.4 5.4 1.3 7.6 1.3S12.2 2.5 14 4.8C12.4 8 10 9.5 7.6 9.5S2.8 8.2 0.9 5.4z" fill="none" stroke="#f2f2f2" stroke-width="1"/><path d="M12.6 3.2l1.6-.5M13.4 4.6l1.9.1" stroke="#f2f2f2" stroke-width="0.7" fill="none"/><circle cx="7.4" cy="5" r="2.7" fill="none" stroke="#f2f2f2" stroke-width="0.9"/><circle cx="7.4" cy="5" r="1" fill="#f2f2f2"/></svg><svg class="a" style="left:51.5px;top:835.2px" width="10.6" height="12.4" viewBox="0 0 12 13" preserveAspectRatio="none"><path d="M9.3 5V3.6C9.3 1.9 8 1 6.6 1 5.4 1 4.4 1.5 3.8 2.3" fill="none" stroke="#f2f2f2" stroke-width="1.2" stroke-linecap="round"/><path d="M1.3 5.7l8.8-.5.7 5.9-8.8.8z" fill="none" stroke="#f2f2f2" stroke-width="1.3" stroke-linejoin="round"/><path d="M4.1 7.3v2.6M6.8 7.1v2.6" stroke="#f2f2f2" stroke-width="1.1"/></svg><div class="t" style="left:69px;top:837px">Path</div><div class="cb" style="left:234px;top:833px;width:79px;height:17px"><div class="t" style="left:4px;top:2px">SrcOver</div><div class="ar" style="width:13px"></div></div>
</div></div>
<div class="a" style="left:0;top:2px;width:1px;height:862px;background:#8c8c8c"></div><div class="a" style="left:1535px;top:2px;width:1px;height:862px;background:#8c8c8c"></div><div class="a" style="left:0;top:863px;width:1536px;height:1px;background:#8c8c8c"></div>
</body></html>
